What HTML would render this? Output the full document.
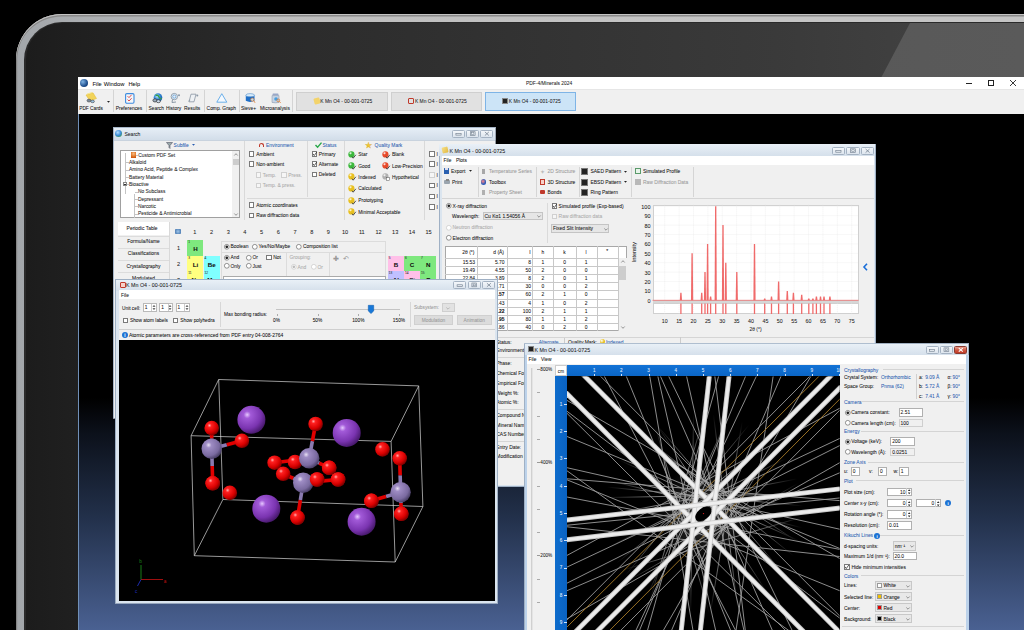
<!DOCTYPE html>
<html><head><meta charset="utf-8">
<style>
*{box-sizing:border-box}
html,body{margin:0;padding:0}
body{width:1024px;height:630px;overflow:hidden;background:#000;position:relative;font-family:"Liberation Sans",sans-serif;color:#111}
.a{position:absolute}
.t{position:absolute;white-space:nowrap;-webkit-text-stroke:0.05px currentColor}
svg{overflow:visible}
</style></head><body>
<div class="a" style="left:15.7px;top:13.8px;width:1100px;height:720px;border-radius:46px;background:linear-gradient(90deg,#a2a6aa 0px,#aaadb0 60px,#bdbdbd 250px,#c4c4c4 700px);box-shadow:inset 0 1px 0 #c4c4c4,inset 0 2.6px 0 #8a8a8a,inset 1.2px 0 0 #858585"></div>
<div class="a" style="left:24px;top:21.6px;width:1100px;height:720px;border-radius:38px;background:#2a2a2a"></div>
<div class="a" style="left:26px;top:23px;width:1100px;height:720px;border-radius:36px;background:linear-gradient(90deg,#1c1c1c 0px,#1f1f1f 40px,#2b2b2b 250px,#3a3a3a 750px,#454545 1000px)"></div>
<div class="a" style="left:0px;top:23px;width:1024px;height:55px;background:linear-gradient(90deg,#505050,#5a5a5a);clip-path:polygon(910px 0,1024px 0,1024px 55px,881px 55px)"></div>
<div class="a" style="left:78px;top:77px;width:946px;height:12px;background:#fff"></div>
<div class="a" style="left:78px;top:89px;width:946px;height:25px;background:#f0f0f0;border-top:1px solid #e6e6e6"></div>
<div class="a" style="left:78px;top:114px;width:946px;height:516px;background:linear-gradient(#000 0%,#000 55%,#0c111b 62%,#22304a 78%,#4a6192 100%)"></div>
<div class="a" style="left:78px;top:114px;width:1px;height:516px;background:#7090b8"></div>
<div class="a" style="left:80px;top:79px;width:8px;height:8px;border-radius:50%;background:radial-gradient(circle at 35% 35%,#7fb3e3,#1f4f8f 60%,#0d2d5a)"></div>
<div class="t" style="left:92.4px;top:80.73px;font-size:5.7px;line-height:6.84px;color:#111;">File</div>
<div class="t" style="left:103.8px;top:80.69px;font-size:5.8px;line-height:6.96px;color:#111;">Window</div>
<div class="t" style="left:128.4px;top:80.73px;font-size:5.7px;line-height:6.84px;color:#111;">Help</div>
<div class="t" style="left:526px;top:80.80px;font-size:4.9px;line-height:5.88px;color:#222;">PDF-4/Minerals 2024</div>
<div class="a" style="left:966px;top:83px;width:6px;height:0.9px;background:#222"></div>
<div class="a" style="left:988px;top:80px;width:6px;height:6px;border:0.9px solid #222"></div>
<svg class="a" style="left:1010px;top:80px" width="6" height="6"><path d="M0 0L6 6M6 0L0 6" stroke="#222" stroke-width="0.9"/></svg>
<svg class="a" style="left:84px;top:92px" width="14" height="12"><path d="M2 3L9 0.8L12.5 6.5L6 9Z" fill="#f2d45a" stroke="#e0b830" stroke-width="0.5"/><path d="M3 2L8 0.5" stroke="#f8e890" stroke-width="1"/><ellipse cx="5" cy="8.6" rx="2" ry="1.4" fill="#7a8a9a" stroke="#444" stroke-width="0.6"/><ellipse cx="8.6" cy="9.4" rx="1.8" ry="1.3" fill="#9ac0e0" stroke="#444" stroke-width="0.6"/></svg>
<svg class="a" style="left:106.5px;top:100.5px" width="4" height="3"><path d="M0 0H3L1.5 1.8Z" fill="#222"/></svg>
<div class="t" style="left:79.2px;top:106.34px;font-size:4.8px;line-height:5.76px;color:#111;">PDF Cards</div>
<div class="a" style="left:113.2px;top:90px;width:1px;height:22px;background:#d4d4d4"></div>
<div class="a" style="left:145.8px;top:90px;width:1px;height:22px;background:#d4d4d4"></div>
<div class="a" style="left:203.8px;top:90px;width:1px;height:22px;background:#d4d4d4"></div>
<div class="a" style="left:238.6px;top:90px;width:1px;height:22px;background:#d4d4d4"></div>
<div class="a" style="left:291.5px;top:90px;width:1px;height:22px;background:#d4d4d4"></div>
<svg class="a" style="left:124.5px;top:92.5px" width="10" height="11"><rect x="0.6" y="0.6" width="8.4" height="9.6" rx="1.2" fill="#f4f6f8" stroke="#3d8ce0" stroke-width="1.1"/><path d="M2.6 3.2L4 4.6L6.6 1.8M2.6 6.6L4 8L6.6 5.2" fill="none" stroke="#d83838" stroke-width="0.9"/></svg>
<div class="t" style="left:115.7px;top:106.27px;font-size:4.95px;line-height:5.94px;color:#111;">Preferences</div>
<svg class="a" style="left:151.5px;top:92.8px" width="11" height="10"><defs><radialGradient id="gl" cx="0.4" cy="0.35" r="0.7"><stop offset="0" stop-color="#bfe6ff"/><stop offset="0.5" stop-color="#2f86d8"/><stop offset="1" stop-color="#1a5aa0"/></radialGradient></defs><circle cx="6" cy="4.6" r="4.3" fill="url(#gl)"/><path d="M3.5 2.5Q6 1.5 7 4Q8 6 9.5 5.5" fill="none" stroke="#3aa040" stroke-width="1.4"/><ellipse cx="3" cy="7.4" rx="2.1" ry="1.6" fill="#9ab" stroke="#333" stroke-width="0.7"/><ellipse cx="6.4" cy="8.2" rx="2" ry="1.5" fill="#cde" stroke="#333" stroke-width="0.7"/></svg>
<div class="t" style="left:148.5px;top:106.30px;font-size:4.9px;line-height:5.88px;color:#111;">Search</div>
<svg class="a" style="left:169.5px;top:92.8px" width="11" height="10"><circle cx="4.3" cy="3.6" r="3.2" fill="#e8eef4" stroke="#8a98a6" stroke-width="0.9"/><circle cx="4.3" cy="3.6" r="1.6" fill="none" stroke="#3a8ad0" stroke-width="0.6"/><path d="M2.5 6.5L2 9.5L6 9" fill="none" stroke="#8a98a6" stroke-width="1"/><circle cx="9" cy="2.2" r="1" fill="#8a98a6"/></svg>
<div class="t" style="left:166px;top:106.30px;font-size:4.9px;line-height:5.88px;color:#111;">History</div>
<svg class="a" style="left:188px;top:92.8px" width="11" height="10"><path d="M3 1.2H8L6 8.8H1Z" fill="#eef1f4" stroke="#8a96a2" stroke-width="0.8"/><path d="M1 8.8Q0.5 6.8 2.2 7.2" fill="none" stroke="#8a96a2" stroke-width="0.7"/><circle cx="9.3" cy="2.6" r="1" fill="#8a98a6"/></svg>
<div class="t" style="left:184px;top:106.30px;font-size:4.9px;line-height:5.88px;color:#111;">Results</div>
<svg class="a" style="left:215.5px;top:93px" width="12" height="10"><path d="M5.8 0.7 L10.8 9.2 L0.8 9.2 Z" fill="#f4f9fe" stroke="#4a9ee6" stroke-width="0.8"/></svg>
<div class="t" style="left:206.6px;top:106.30px;font-size:4.9px;line-height:5.88px;color:#111;">Comp. Graph</div>
<svg class="a" style="left:244.5px;top:92.8px" width="11" height="10"><path d="M0.8 2.2V7.8Q5 10 9.5 7.8V2.2Z" fill="#1f6fc8"/><ellipse cx="5.15" cy="2.2" rx="4.35" ry="1.6" fill="#d8ecfb" stroke="#3a7cc0" stroke-width="0.5"/><circle cx="7.3" cy="6.6" r="1.6" fill="#bfe0f8" stroke="#e07a2a" stroke-width="0.7"/><path d="M8.4 7.8L10 9.4" stroke="#e07a2a" stroke-width="1"/></svg>
<div class="t" style="left:241px;top:106.30px;font-size:4.9px;line-height:5.88px;color:#111;">Sieve+</div>
<svg class="a" style="left:271px;top:92.5px" width="11" height="11"><rect x="1.5" y="0.6" width="6" height="2" rx="0.8" fill="#9aa8c8"/><path d="M1 2.6H8V9.4Q4.5 10.4 1 9.4Z" fill="#c8d4e4" stroke="#8090a8" stroke-width="0.5"/><circle cx="5" cy="6" r="1.8" fill="#4aa0e0"/><circle cx="7.3" cy="7.4" r="1.4" fill="none" stroke="#e07a2a" stroke-width="0.7"/><path d="M8.2 8.4L9.6 9.8" stroke="#e07a2a" stroke-width="0.9"/></svg>
<div class="t" style="left:260px;top:106.27px;font-size:4.95px;line-height:5.94px;color:#111;">Microanalysis</div>
<div class="a" style="left:296px;top:91.7px;width:91.5px;height:19.3px;background:#e1e1e1;border:0.9px solid #cfcfcf"></div>
<div class="a" style="left:314px;top:98px;width:6px;height:6px;background:#f3d36b;border-radius:1px;transform:rotate(-15deg)"></div>
<div class="t" style="left:320.3px;top:99.27px;font-size:4.95px;line-height:5.94px;color:#222;">K Mn O4 - 00-001-0725</div>
<div class="a" style="left:390.6px;top:91.7px;width:91.5px;height:19.3px;background:#e1e1e1;border:0.9px solid #cfcfcf"></div>
<div class="a" style="left:407.6px;top:98px;width:6px;height:6px;border:1.4px solid #c0392b;border-radius:1px"></div>
<div class="t" style="left:414.90000000000003px;top:99.27px;font-size:4.95px;line-height:5.94px;color:#222;">K Mn O4 - 00-001-0725</div>
<div class="a" style="left:484.5px;top:91.7px;width:91.5px;height:19.3px;background:#cce4f7;border:0.9px solid #7eb4e6"></div>
<div class="a" style="left:501.5px;top:98px;width:6px;height:6px;background:#222;border:0.8px solid #888"></div>
<div class="t" style="left:508.8px;top:99.27px;font-size:4.95px;line-height:5.94px;color:#222;">K Mn O4 - 00-001-0725</div>
<div class="a" style="left:0;top:0;width:1024px;height:630px;clip-path:inset(127px 528.5px 211.5px 113px)">
<div class="a" style="left:113px;top:127px;width:382.5px;height:291.5px;background:#f0f0f0;border:0.9px solid #a7b6c8"></div>
<div class="a" style="left:113px;top:127px;width:382.5px;height:12.5px;background:linear-gradient(#e6eef6,#d2dde9);border:0.9px solid #a7b6c8;border-bottom:none"></div>
<div class="a" style="left:115px;top:130px;width:7px;height:7px;border-radius:50%;background:radial-gradient(circle at 40% 35%,#b5e0ff,#3a8ad8 50%,#3c9a4a 85%)"></div>
<div class="t" style="left:124.5px;top:131.25px;font-size:5.0px;line-height:6.00px;color:#222;">Search</div>
<div class="a" style="left:452.0px;top:129.8px;width:13px;height:7.8px;border:0.7px solid #a4b2c2;border-radius:1.5px;background:linear-gradient(#f4f7fa,#dde5ee)"></div>
<svg class="a" style="left:0;top:0" width="1" height="1"><rect x="455.9" y="133.50000000000003" width="5.2" height="1.6" fill="none" stroke="#6a7888" stroke-width="0.6"/></svg>
<div class="a" style="left:466.2px;top:129.8px;width:13px;height:7.8px;border:0.7px solid #a4b2c2;border-radius:1.5px;background:linear-gradient(#f4f7fa,#dde5ee)"></div>
<svg class="a" style="left:0;top:0" width="1" height="1"><rect x="470.3" y="131.70000000000002" width="4.8" height="3.8" fill="none" stroke="#6a7888" stroke-width="0.6"/><rect x="471.5" y="132.70000000000002" width="2.4" height="1.8" fill="none" stroke="#6a7888" stroke-width="0.5"/></svg>
<div class="a" style="left:480.4px;top:129.8px;width:13px;height:7.8px;border:0.7px solid #a4b2c2;border-radius:1.5px;background:linear-gradient(#f4f7fa,#dde5ee)"></div>
<svg class="a" style="left:0;top:0" width="1" height="1"><path d="M484.9 131.9L488.9 135.50000000000003M488.9 131.9L484.9 135.50000000000003" stroke="#6a7888" stroke-width="0.7"/></svg>
<div class="a" style="left:114px;top:139.5px;width:380.5px;height:0.8px;background:#c9d3de"></div>
<svg class="a" style="left:166px;top:141.5px" width="7" height="7"><path d="M0.5 0.5H6.5L4 3.5V6.5L3 5.5V3.5Z" fill="#9aa" stroke="#556" stroke-width="0.6"/></svg>
<div class="t" style="left:173.6px;top:142.77px;font-size:4.95px;line-height:5.94px;color:#2a5db0;">Subfile</div>
<svg class="a" style="left:192px;top:144.3px" width="3" height="2"><path d="M0 0H3L1.5 1.8Z" fill="#2a5db0"/></svg>
<div class="a" style="left:120px;top:150.2px;width:120px;height:68px;background:#fff;border:0.7px solid #a0a0a0"></div>
<div class="a" style="left:232px;top:151px;width:7.4px;height:66.4px;background:#f0f0f0"></div>
<div class="a" style="left:232.5px;top:158.5px;width:6.4px;height:6px;background:#cdcdcd"></div>
<svg class="a" style="left:234px;top:153px" width="4" height="3"><path d="M0.3 2.5L2 0.7L3.7 2.5" fill="none" stroke="#555" stroke-width="0.6"/></svg>
<svg class="a" style="left:234px;top:212.5px" width="4" height="3"><path d="M0.3 0.5L2 2.3L3.7 0.5" fill="none" stroke="#555" stroke-width="0.6"/></svg>
<div class="a" style="left:125px;top:153px;width:0.6px;height:41px;border-left:0.5px solid #c4c4c4"></div>
<div class="a" style="left:134px;top:194px;width:0.6px;height:24px;border-left:0.5px solid #c4c4c4"></div>
<div class="t" style="left:138.3px;top:152.59px;font-size:4.9px;line-height:5.88px;color:#222;">Custom PDF Set</div>
<div class="a" style="left:134.5px;top:154.8px;width:3px;height:0.6px;border-top:0.5px solid #c4c4c4"></div>
<div class="t" style="left:129px;top:159.99px;font-size:4.9px;line-height:5.88px;color:#222;">Alkaloid</div>
<div class="a" style="left:125.5px;top:162.2px;width:3px;height:0.6px;border-top:0.5px solid #c4c4c4"></div>
<div class="t" style="left:129px;top:167.39px;font-size:4.9px;line-height:5.88px;color:#222;">Amino Acid, Peptide &amp; Complex</div>
<div class="a" style="left:125.5px;top:169.6px;width:3px;height:0.6px;border-top:0.5px solid #c4c4c4"></div>
<div class="t" style="left:129px;top:174.79px;font-size:4.9px;line-height:5.88px;color:#222;">Battery Material</div>
<div class="a" style="left:125.5px;top:177px;width:3px;height:0.6px;border-top:0.5px solid #c4c4c4"></div>
<div class="t" style="left:129px;top:182.09px;font-size:4.9px;line-height:5.88px;color:#222;">Bioactive</div>
<div class="a" style="left:125.5px;top:184.3px;width:3px;height:0.6px;border-top:0.5px solid #c4c4c4"></div>
<div class="t" style="left:138px;top:189.49px;font-size:4.9px;line-height:5.88px;color:#222;">No Subclass</div>
<div class="a" style="left:134.5px;top:191.7px;width:3px;height:0.6px;border-top:0.5px solid #c4c4c4"></div>
<div class="t" style="left:138px;top:196.79px;font-size:4.9px;line-height:5.88px;color:#222;">Depressant</div>
<div class="a" style="left:134.5px;top:199px;width:3px;height:0.6px;border-top:0.5px solid #c4c4c4"></div>
<div class="t" style="left:138px;top:204.09px;font-size:4.9px;line-height:5.88px;color:#222;">Narcotic</div>
<div class="a" style="left:134.5px;top:206.3px;width:3px;height:0.6px;border-top:0.5px solid #c4c4c4"></div>
<div class="t" style="left:138px;top:211.49px;font-size:4.9px;line-height:5.88px;color:#222;">Pesticide &amp; Antimicrobial</div>
<div class="a" style="left:134.5px;top:213.7px;width:3px;height:0.6px;border-top:0.5px solid #c4c4c4"></div>
<div class="a" style="left:131px;top:151.5px;width:5px;height:6px;background:radial-gradient(circle at 50% 30%,#f6c08a,#e07020 60%,#c04a10)"></div>
<div class="a" style="left:122.8px;top:182.3px;width:4px;height:4px;border:0.6px solid #888;background:#fff"></div>
<div class="a" style="left:123.6px;top:184.1px;width:2.4px;height:0.6px;background:#333"></div>
<div class="a" style="left:243.8px;top:141px;width:0.8px;height:79px;background:#d9d9d9"></div>
<div class="a" style="left:306.5px;top:141px;width:0.8px;height:56px;background:#d9d9d9"></div>
<div class="a" style="left:344px;top:141px;width:0.8px;height:79px;background:#d9d9d9"></div>
<div class="a" style="left:424.4px;top:141px;width:0.8px;height:79px;background:#d9d9d9"></div>
<div class="a" style="left:247px;top:198px;width:97px;height:0.8px;background:#d9d9d9"></div>
<div class="a" style="left:259px;top:143px;width:5px;height:3.5px;border:0.8px solid #c0392b;border-bottom:none;border-radius:3px 3px 0 0"></div>
<div class="t" style="left:266px;top:142.77px;font-size:4.95px;line-height:5.94px;color:#2a5db0;">Environment</div>
<div class="a" style="left:248.6px;top:151.0px;width:5.6px;height:5.6px;border:0.7px solid #7a7a7a;background:#fff"></div>
<div class="t" style="left:256.2px;top:151.59px;font-size:4.9px;line-height:5.88px;color:#111;">Ambient</div>
<div class="a" style="left:248.6px;top:161.39999999999998px;width:5.6px;height:5.6px;border:0.7px solid #7a7a7a;background:#fff"></div>
<div class="t" style="left:256.2px;top:161.99px;font-size:4.9px;line-height:5.88px;color:#111;">Non-ambient</div>
<div class="a" style="left:255.5px;top:172.2px;width:5.6px;height:5.6px;border:0.7px solid #d0d0d0;background:#f6f6f6"></div>
<div class="t" style="left:262.8px;top:172.79px;font-size:4.9px;line-height:5.88px;color:#aaa;">Temp.</div>
<div class="a" style="left:281px;top:172.2px;width:5.6px;height:5.6px;border:0.7px solid #d0d0d0;background:#f6f6f6"></div>
<div class="t" style="left:288.3px;top:172.79px;font-size:4.9px;line-height:5.88px;color:#aaa;">Press.</div>
<div class="a" style="left:255.5px;top:182.89999999999998px;width:5.6px;height:5.6px;border:0.7px solid #d0d0d0;background:#f6f6f6"></div>
<div class="t" style="left:262.8px;top:183.49px;font-size:4.9px;line-height:5.88px;color:#aaa;">Temp. &amp; press.</div>
<div class="a" style="left:248.6px;top:202.2px;width:5.6px;height:5.6px;border:0.7px solid #7a7a7a;background:#fff"></div>
<div class="t" style="left:256.2px;top:202.79px;font-size:4.9px;line-height:5.88px;color:#111;">Atomic coordinates</div>
<div class="a" style="left:248.6px;top:212.7px;width:5.6px;height:5.6px;border:0.7px solid #7a7a7a;background:#fff"></div>
<div class="t" style="left:256.2px;top:213.29px;font-size:4.9px;line-height:5.88px;color:#111;">Raw diffraction data</div>
<svg class="a" style="left:314.5px;top:141.8px" width="7" height="6"><path d="M0.5 3L2.6 5.3L6.5 0.6" fill="none" stroke="#2aa84a" stroke-width="1.4"/></svg>
<div class="t" style="left:322.5px;top:142.77px;font-size:4.95px;line-height:5.94px;color:#2a5db0;">Status</div>
<div class="a" style="left:311.5px;top:151.0px;width:5.6px;height:5.6px;border:0.7px solid #7a7a7a;background:#fff"></div>
<svg class="a" style="left:311.5px;top:151.0px" width="5.6" height="5.6"><path d="M1 2.8 L2.2399999999999998 4.592 L4.8 1" fill="none" stroke="#333" stroke-width="0.8"/></svg>
<div class="t" style="left:318.7px;top:151.59px;font-size:4.9px;line-height:5.88px;color:#111;">Primary</div>
<div class="a" style="left:311.5px;top:161.39999999999998px;width:5.6px;height:5.6px;border:0.7px solid #7a7a7a;background:#fff"></div>
<svg class="a" style="left:311.5px;top:161.39999999999998px" width="5.6" height="5.6"><path d="M1 2.8 L2.2399999999999998 4.592 L4.8 1" fill="none" stroke="#333" stroke-width="0.8"/></svg>
<div class="t" style="left:318.7px;top:161.99px;font-size:4.9px;line-height:5.88px;color:#111;">Alternate</div>
<div class="a" style="left:311.5px;top:171.89999999999998px;width:5.6px;height:5.6px;border:0.7px solid #7a7a7a;background:#fff"></div>
<div class="t" style="left:318.7px;top:172.49px;font-size:4.9px;line-height:5.88px;color:#111;">Deleted</div>
<div class="t" style="left:364.5px;top:141.43px;font-size:7.5px;line-height:9.00px;color:#f2c832;-webkit-text-stroke:0.3px #d0a020">&#9733;</div>
<div class="t" style="left:374.6px;top:142.77px;font-size:4.95px;line-height:5.94px;color:#2a5db0;">Quality Mark</div>
<svg class="a" style="left:347.8px;top:150.70000000000002px" width="9" height="9"><defs><radialGradient id="q348154" cx="0.35" cy="0.3" r="0.75"><stop offset="0" stop-color="#fff"/><stop offset="0.35" stop-color="#3cb83c"/><stop offset="1" stop-color="#3cb83c"/></radialGradient></defs><circle cx="3.4" cy="3.4" r="3.1" fill="url(#q348154)"/><path d="M4 5.6L5.2 7.2L7.8 3.8" fill="none" stroke="#222" stroke-width="0.8"/></svg>
<div class="t" style="left:358.3px;top:152.09px;font-size:4.9px;line-height:5.88px;color:#111;">Star</div>
<svg class="a" style="left:347.8px;top:162.20000000000002px" width="9" height="9"><defs><radialGradient id="q348165" cx="0.35" cy="0.3" r="0.75"><stop offset="0" stop-color="#fff"/><stop offset="0.35" stop-color="#3cb83c"/><stop offset="1" stop-color="#3cb83c"/></radialGradient></defs><circle cx="3.4" cy="3.4" r="3.1" fill="url(#q348165)"/><path d="M4 5.6L5.2 7.2L7.8 3.8" fill="none" stroke="#222" stroke-width="0.8"/></svg>
<div class="t" style="left:358.3px;top:163.59px;font-size:4.9px;line-height:5.88px;color:#111;">Good</div>
<svg class="a" style="left:347.8px;top:173.4px" width="9" height="9"><defs><radialGradient id="q348177" cx="0.35" cy="0.3" r="0.75"><stop offset="0" stop-color="#fff"/><stop offset="0.35" stop-color="#e8c020"/><stop offset="1" stop-color="#e8c020"/></radialGradient></defs><circle cx="3.4" cy="3.4" r="3.1" fill="url(#q348177)"/><path d="M4 5.6L5.2 7.2L7.8 3.8" fill="none" stroke="#222" stroke-width="0.8"/></svg>
<div class="t" style="left:358.3px;top:174.79px;font-size:4.9px;line-height:5.88px;color:#111;">Indexed</div>
<svg class="a" style="left:347.8px;top:185.1px" width="9" height="9"><defs><radialGradient id="q348188" cx="0.35" cy="0.3" r="0.75"><stop offset="0" stop-color="#fff"/><stop offset="0.35" stop-color="#e8c020"/><stop offset="1" stop-color="#e8c020"/></radialGradient></defs><circle cx="3.4" cy="3.4" r="3.1" fill="url(#q348188)"/><path d="M4 5.6L5.2 7.2L7.8 3.8" fill="none" stroke="#222" stroke-width="0.8"/></svg>
<div class="t" style="left:358.3px;top:186.49px;font-size:4.9px;line-height:5.88px;color:#111;">Calculated</div>
<svg class="a" style="left:347.8px;top:196.70000000000002px" width="9" height="9"><defs><radialGradient id="q348200" cx="0.35" cy="0.3" r="0.75"><stop offset="0" stop-color="#fff"/><stop offset="0.35" stop-color="#e8c020"/><stop offset="1" stop-color="#e8c020"/></radialGradient></defs><circle cx="3.4" cy="3.4" r="3.1" fill="url(#q348200)"/><path d="M4 5.6L5.2 7.2L7.8 3.8" fill="none" stroke="#222" stroke-width="0.8"/></svg>
<div class="t" style="left:358.3px;top:198.09px;font-size:4.9px;line-height:5.88px;color:#111;">Prototyping</div>
<svg class="a" style="left:347.8px;top:208.4px" width="9" height="9"><defs><radialGradient id="q348212" cx="0.35" cy="0.3" r="0.75"><stop offset="0" stop-color="#fff"/><stop offset="0.35" stop-color="#e8c020"/><stop offset="1" stop-color="#e8c020"/></radialGradient></defs><circle cx="3.4" cy="3.4" r="3.1" fill="url(#q348212)"/><path d="M4 5.6L5.2 7.2L7.8 3.8" fill="none" stroke="#222" stroke-width="0.8"/></svg>
<div class="t" style="left:358.3px;top:209.79px;font-size:4.9px;line-height:5.88px;color:#111;">Minimal Acceptable</div>
<svg class="a" style="left:381.5px;top:150.70000000000002px" width="9" height="9"><defs><radialGradient id="q382154" cx="0.35" cy="0.3" r="0.75"><stop offset="0" stop-color="#fff"/><stop offset="0.35" stop-color="#e84a2a"/><stop offset="1" stop-color="#e84a2a"/></radialGradient></defs><circle cx="3.4" cy="3.4" r="3.1" fill="url(#q382154)"/><path d="M4 5.6L5.2 7.2L7.8 3.8" fill="none" stroke="#222" stroke-width="0.8"/></svg>
<div class="t" style="left:392px;top:152.09px;font-size:4.9px;line-height:5.88px;color:#111;">Blank</div>
<svg class="a" style="left:381.5px;top:162.20000000000002px" width="9" height="9"><defs><radialGradient id="q382165" cx="0.35" cy="0.3" r="0.75"><stop offset="0" stop-color="#fff"/><stop offset="0.35" stop-color="#e84a2a"/><stop offset="1" stop-color="#e84a2a"/></radialGradient></defs><circle cx="3.4" cy="3.4" r="3.1" fill="url(#q382165)"/><path d="M4 5.6L5.2 7.2L7.8 3.8" fill="none" stroke="#222" stroke-width="0.8"/></svg>
<div class="t" style="left:392px;top:163.59px;font-size:4.9px;line-height:5.88px;color:#111;">Low-Precision</div>
<svg class="a" style="left:381.5px;top:173.4px" width="9" height="9"><defs><radialGradient id="q382177" cx="0.35" cy="0.3" r="0.75"><stop offset="0" stop-color="#fff"/><stop offset="0.35" stop-color="#b0b0b0"/><stop offset="1" stop-color="#b0b0b0"/></radialGradient></defs><circle cx="3.4" cy="3.4" r="3.1" fill="url(#q382177)"/><rect x="4.3" y="4.6" width="3" height="3" fill="#fff" stroke="#555" stroke-width="0.5"/></svg>
<div class="t" style="left:392px;top:174.79px;font-size:4.9px;line-height:5.88px;color:#111;">Hypothetical</div>
<div class="a" style="left:429px;top:151.0px;width:5.6px;height:5.6px;border:0.7px solid #7a7a7a;background:#fff"></div>
<div class="t" style="left:436.5px;top:151.59px;font-size:4.9px;line-height:5.88px;color:#111;">I</div>
<div class="a" style="left:429px;top:161.39999999999998px;width:5.6px;height:5.6px;border:0.7px solid #7a7a7a;background:#fff"></div>
<div class="t" style="left:436.5px;top:161.99px;font-size:4.9px;line-height:5.88px;color:#111;">I</div>
<div class="a" style="left:429px;top:172.2px;width:5.6px;height:5.6px;border:0.7px solid #d0d0d0;background:#f6f6f6"></div>
<div class="t" style="left:436.5px;top:172.79px;font-size:4.9px;line-height:5.88px;color:#111;">I</div>
<div class="a" style="left:429px;top:182.89999999999998px;width:5.6px;height:5.6px;border:0.7px solid #7a7a7a;background:#fff"></div>
<div class="t" style="left:436.5px;top:183.49px;font-size:4.9px;line-height:5.88px;color:#111;">I</div>
<div class="a" style="left:429px;top:193.5px;width:5.6px;height:5.6px;border:0.7px solid #7a7a7a;background:#fff"></div>
<div class="t" style="left:436.5px;top:194.09px;font-size:4.9px;line-height:5.88px;color:#111;">I</div>
<div class="a" style="left:429px;top:204.2px;width:5.6px;height:5.6px;border:0.7px solid #7a7a7a;background:#fff"></div>
<div class="t" style="left:436.5px;top:204.79px;font-size:4.9px;line-height:5.88px;color:#111;">I</div>
<div class="a" style="left:118px;top:222px;width:51px;height:13.2px;background:#fff"></div>
<div class="t" style="left:126.6px;top:226.37px;font-size:4.95px;line-height:5.94px;color:#111;">Periodic Table</div>
<div class="a" style="left:118px;top:235.5px;width:51px;height:11.8px;background:#f0f0f0;border-top:0.8px solid #dcdcdc"></div>
<div class="t" style="left:93.5px;width:100px;text-align:center;top:239.29px;font-size:4.9px;line-height:5.88px;color:#111;">Formula/Name</div>
<div class="a" style="left:118px;top:247.7px;width:51px;height:11.8px;background:#f0f0f0;border-top:0.8px solid #dcdcdc"></div>
<div class="t" style="left:93.5px;width:100px;text-align:center;top:251.49px;font-size:4.9px;line-height:5.88px;color:#111;">Classifications</div>
<div class="a" style="left:118px;top:259.9px;width:51px;height:11.8px;background:#f0f0f0;border-top:0.8px solid #dcdcdc"></div>
<div class="t" style="left:93.5px;width:100px;text-align:center;top:263.69px;font-size:4.9px;line-height:5.88px;color:#111;">Crystallography</div>
<div class="a" style="left:118px;top:272.1px;width:51px;height:11.8px;background:#f0f0f0;border-top:0.8px solid #dcdcdc"></div>
<div class="t" style="left:93.5px;width:100px;text-align:center;top:275.90px;font-size:4.9px;line-height:5.88px;color:#111;">Modulated</div>
<div class="a" style="left:169px;top:222px;width:0.8px;height:60px;background:#d9d9d9"></div>
<div class="a" style="left:175px;top:229px;width:6px;height:5px;background:radial-gradient(circle,#9ec4e8,#3c6ea8);border-radius:1px"></div>
<div class="t" style="left:144.8px;width:100px;text-align:center;top:229.48px;font-size:5.6px;line-height:6.72px;color:#222;">1</div>
<div class="t" style="left:161.5px;width:100px;text-align:center;top:229.48px;font-size:5.6px;line-height:6.72px;color:#222;">2</div>
<div class="t" style="left:178.20000000000002px;width:100px;text-align:center;top:229.48px;font-size:5.6px;line-height:6.72px;color:#222;">3</div>
<div class="t" style="left:194.9px;width:100px;text-align:center;top:229.48px;font-size:5.6px;line-height:6.72px;color:#222;">4</div>
<div class="t" style="left:211.60000000000002px;width:100px;text-align:center;top:229.48px;font-size:5.6px;line-height:6.72px;color:#222;">5</div>
<div class="t" style="left:228.3px;width:100px;text-align:center;top:229.48px;font-size:5.6px;line-height:6.72px;color:#222;">6</div>
<div class="t" style="left:245.0px;width:100px;text-align:center;top:229.48px;font-size:5.6px;line-height:6.72px;color:#222;">7</div>
<div class="t" style="left:261.7px;width:100px;text-align:center;top:229.48px;font-size:5.6px;line-height:6.72px;color:#222;">8</div>
<div class="t" style="left:278.4px;width:100px;text-align:center;top:229.48px;font-size:5.6px;line-height:6.72px;color:#222;">9</div>
<div class="t" style="left:295.1px;width:100px;text-align:center;top:229.48px;font-size:5.6px;line-height:6.72px;color:#222;">10</div>
<div class="t" style="left:311.8px;width:100px;text-align:center;top:229.48px;font-size:5.6px;line-height:6.72px;color:#222;">11</div>
<div class="t" style="left:328.5px;width:100px;text-align:center;top:229.48px;font-size:5.6px;line-height:6.72px;color:#222;">12</div>
<div class="t" style="left:345.2px;width:100px;text-align:center;top:229.48px;font-size:5.6px;line-height:6.72px;color:#222;">13</div>
<div class="t" style="left:361.9px;width:100px;text-align:center;top:229.48px;font-size:5.6px;line-height:6.72px;color:#222;">14</div>
<div class="t" style="left:378.6px;width:100px;text-align:center;top:229.48px;font-size:5.6px;line-height:6.72px;color:#222;">15</div>
<div class="t" style="left:128.6px;width:100px;text-align:center;top:245.28px;font-size:5.6px;line-height:6.72px;color:#222;">1</div>
<div class="t" style="left:128.6px;width:100px;text-align:center;top:261.48px;font-size:5.6px;line-height:6.72px;color:#222;">2</div>
<div class="t" style="left:128.6px;width:100px;text-align:center;top:277.48px;font-size:5.6px;line-height:6.72px;color:#222;">3</div>
<div class="a" style="left:187.3px;top:240.3px;width:16.2px;height:15.6px;background:#7ee87e"></div>
<div class="t" style="left:188.3px;top:241.06px;font-size:3.2px;line-height:3.84px;color:#333;">1</div>
<div class="t" style="left:145.5px;width:100px;text-align:center;top:245.11px;font-size:6.2px;line-height:7.44px;color:#111;font-weight:bold">H</div>
<div class="a" style="left:187.3px;top:255.8px;width:16.2px;height:15.6px;background:#ffff80"></div>
<div class="t" style="left:188.3px;top:256.56px;font-size:3.2px;line-height:3.84px;color:#333;">3</div>
<div class="t" style="left:145.5px;width:100px;text-align:center;top:260.61px;font-size:6.2px;line-height:7.44px;color:#111;font-weight:bold">Li</div>
<div class="a" style="left:203.5px;top:255.8px;width:16.2px;height:15.6px;background:#80ffff"></div>
<div class="t" style="left:204.5px;top:256.56px;font-size:3.2px;line-height:3.84px;color:#333;">4</div>
<div class="t" style="left:161.7px;width:100px;text-align:center;top:260.61px;font-size:6.2px;line-height:7.44px;color:#111;font-weight:bold">Be</div>
<div class="a" style="left:187.3px;top:271.4px;width:16.2px;height:15.6px;background:#ffff80"></div>
<div class="t" style="left:188.3px;top:272.16px;font-size:3.2px;line-height:3.84px;color:#333;">11</div>
<div class="t" style="left:145.5px;width:100px;text-align:center;top:276.21px;font-size:6.2px;line-height:7.44px;color:#111;font-weight:bold">Na</div>
<div class="a" style="left:203.5px;top:271.4px;width:16.2px;height:15.6px;background:#80ffff"></div>
<div class="t" style="left:204.5px;top:272.16px;font-size:3.2px;line-height:3.84px;color:#333;">12</div>
<div class="t" style="left:161.7px;width:100px;text-align:center;top:276.21px;font-size:6.2px;line-height:7.44px;color:#111;font-weight:bold">Mg</div>
<div class="a" style="left:387.7px;top:255.8px;width:16.2px;height:15.6px;background:#ffc0e8"></div>
<div class="t" style="left:388.7px;top:256.56px;font-size:3.2px;line-height:3.84px;color:#333;">5</div>
<div class="t" style="left:345.9px;width:100px;text-align:center;top:260.61px;font-size:6.2px;line-height:7.44px;color:#111;font-weight:bold">B</div>
<div class="a" style="left:403.9px;top:255.8px;width:16.2px;height:15.6px;background:#7ee87e"></div>
<div class="t" style="left:404.9px;top:256.56px;font-size:3.2px;line-height:3.84px;color:#333;">6</div>
<div class="t" style="left:362.09999999999997px;width:100px;text-align:center;top:260.61px;font-size:6.2px;line-height:7.44px;color:#111;font-weight:bold">C</div>
<div class="a" style="left:420.1px;top:255.8px;width:16.2px;height:15.6px;background:#7ee87e"></div>
<div class="t" style="left:421.1px;top:256.56px;font-size:3.2px;line-height:3.84px;color:#333;">7</div>
<div class="t" style="left:378.3px;width:100px;text-align:center;top:260.61px;font-size:6.2px;line-height:7.44px;color:#111;font-weight:bold">N</div>
<div class="a" style="left:387.7px;top:271.4px;width:16.2px;height:15.6px;background:#c0c0ff"></div>
<div class="t" style="left:388.7px;top:272.16px;font-size:3.2px;line-height:3.84px;color:#333;">13</div>
<div class="t" style="left:345.9px;width:100px;text-align:center;top:276.21px;font-size:6.2px;line-height:7.44px;color:#111;font-weight:bold">Al</div>
<div class="a" style="left:403.9px;top:271.4px;width:16.2px;height:15.6px;background:#ffc0e8"></div>
<div class="t" style="left:404.9px;top:272.16px;font-size:3.2px;line-height:3.84px;color:#333;">14</div>
<div class="t" style="left:362.09999999999997px;width:100px;text-align:center;top:276.21px;font-size:6.2px;line-height:7.44px;color:#111;font-weight:bold">Si</div>
<div class="a" style="left:420.1px;top:271.4px;width:16.2px;height:15.6px;background:#7ee87e"></div>
<div class="t" style="left:421.1px;top:272.16px;font-size:3.2px;line-height:3.84px;color:#333;">15</div>
<div class="t" style="left:378.3px;width:100px;text-align:center;top:276.21px;font-size:6.2px;line-height:7.44px;color:#111;font-weight:bold">P</div>
<div class="a" style="left:221.2px;top:240.8px;width:164.8px;height:40px;border:0.8px solid #dcdcdc;background:#f0f0f0"></div>
<svg class="a" style="left:223.5px;top:243.6px" width="5.6" height="5.6"><circle cx="2.8" cy="2.8" r="2.4" fill="#fff" stroke="#6a6a6a" stroke-width="0.7"/><circle cx="2.8" cy="2.8" r="1.35" fill="#222"/></svg>
<div class="t" style="left:230.5px;top:244.19px;font-size:4.9px;line-height:5.88px;color:#111;">Boolean</div>
<svg class="a" style="left:251.5px;top:243.6px" width="5.6" height="5.6"><circle cx="2.8" cy="2.8" r="2.4" fill="#fff" stroke="#6a6a6a" stroke-width="0.7"/></svg>
<div class="t" style="left:258.5px;top:244.19px;font-size:4.9px;line-height:5.88px;color:#111;">Yes/No/Maybe</div>
<svg class="a" style="left:296px;top:243.6px" width="5.6" height="5.6"><circle cx="2.8" cy="2.8" r="2.4" fill="#fff" stroke="#6a6a6a" stroke-width="0.7"/></svg>
<div class="t" style="left:303px;top:244.19px;font-size:4.9px;line-height:5.88px;color:#111;">Composition list</div>
<div class="a" style="left:221.5px;top:251.5px;width:164px;height:0.8px;background:#dcdcdc"></div>
<svg class="a" style="left:223.5px;top:254.7px" width="5.6" height="5.6"><circle cx="2.8" cy="2.8" r="2.4" fill="#fff" stroke="#6a6a6a" stroke-width="0.7"/><circle cx="2.8" cy="2.8" r="1.35" fill="#222"/></svg>
<div class="t" style="left:230.5px;top:255.29px;font-size:4.9px;line-height:5.88px;color:#111;">And</div>
<svg class="a" style="left:245.5px;top:254.7px" width="5.6" height="5.6"><circle cx="2.8" cy="2.8" r="2.4" fill="#fff" stroke="#6a6a6a" stroke-width="0.7"/></svg>
<div class="t" style="left:252.5px;top:255.29px;font-size:4.9px;line-height:5.88px;color:#111;">Or</div>
<div class="a" style="left:266px;top:254.7px;width:5.6px;height:5.6px;border:0.7px solid #7a7a7a;background:#fff"></div>
<div class="t" style="left:273.2px;top:255.29px;font-size:4.9px;line-height:5.88px;color:#111;">Not</div>
<svg class="a" style="left:223.5px;top:263.2px" width="5.6" height="5.6"><circle cx="2.8" cy="2.8" r="2.4" fill="#fff" stroke="#6a6a6a" stroke-width="0.7"/></svg>
<div class="t" style="left:230.5px;top:263.80px;font-size:4.9px;line-height:5.88px;color:#111;">Only</div>
<svg class="a" style="left:245.5px;top:263.2px" width="5.6" height="5.6"><circle cx="2.8" cy="2.8" r="2.4" fill="#fff" stroke="#6a6a6a" stroke-width="0.7"/></svg>
<div class="t" style="left:252.5px;top:263.80px;font-size:4.9px;line-height:5.88px;color:#111;">Just</div>
<div class="a" style="left:285.5px;top:253px;width:0.8px;height:26px;background:#dcdcdc"></div>
<div class="t" style="left:289.5px;top:255.29px;font-size:4.9px;line-height:5.88px;color:#aaa;">Grouping:</div>
<svg class="a" style="left:291px;top:264.2px" width="5.6" height="5.6"><circle cx="2.8" cy="2.8" r="2.4" fill="#fff" stroke="#c8c8c8" stroke-width="0.7"/><circle cx="2.8" cy="2.8" r="1.35" fill="#bbb"/></svg>
<div class="t" style="left:297.5px;top:264.80px;font-size:4.9px;line-height:5.88px;color:#aaa;">And</div>
<svg class="a" style="left:311px;top:264.2px" width="5.6" height="5.6"><circle cx="2.8" cy="2.8" r="2.4" fill="#fff" stroke="#c8c8c8" stroke-width="0.7"/></svg>
<div class="t" style="left:317.5px;top:264.80px;font-size:4.9px;line-height:5.88px;color:#aaa;">Or</div>
<div class="a" style="left:328.5px;top:253px;width:0.8px;height:26px;background:#dcdcdc"></div>
<div class="t" style="left:333px;top:255.07px;font-size:6.5px;line-height:7.80px;color:#999;">&#10010;</div>
<div class="t" style="left:343px;top:255.07px;font-size:6.5px;line-height:7.80px;color:#999;">&#8630;</div>
<div class="a" style="left:223px;top:276px;width:163px;height:8px;background:#fff;border:0.8px solid #aaa"></div>
</div>
<div class="a" style="left:0;top:0;width:1024px;height:630px;clip-path:inset(143.6px 148px 142.5px 438.6px)">
<div class="a" style="left:438.6px;top:143.6px;width:437.4px;height:343.9px;background:#dbe5ef;border:0.8px solid #9fb0c4"></div>
<div class="a" style="left:439.40000000000003px;top:144.4px;width:435.79999999999995px;height:11.6px;background:linear-gradient(#e9f0f7,#d5e0eb)"></div>
<div class="a" style="left:442px;top:147px;width:6px;height:5.5px;background:linear-gradient(135deg,#f7e08a,#e0b840);border-radius:1px;transform:rotate(-12deg)"></div>
<div class="t" style="left:449.6px;top:147.62px;font-size:5.3px;line-height:6.36px;color:#222;">K Mn O4 - 00-001-0725</div>
<div class="a" style="left:831.8000000000001px;top:147px;width:13.2px;height:7.6px;border:0.7px solid #a4b2c2;border-radius:1.5px;background:linear-gradient(#f4f7fa,#dde5ee)"></div>
<svg class="a" style="left:0;top:0" width="1" height="1"><rect x="835.8000000000001" y="150.60000000000002" width="5.2" height="1.6" fill="none" stroke="#6a7888" stroke-width="0.6"/></svg>
<div class="a" style="left:846.4000000000001px;top:147px;width:13.2px;height:7.6px;border:0.7px solid #a4b2c2;border-radius:1.5px;background:linear-gradient(#f4f7fa,#dde5ee)"></div>
<svg class="a" style="left:0;top:0" width="1" height="1"><rect x="850.6000000000001" y="148.8" width="4.8" height="3.8" fill="none" stroke="#6a7888" stroke-width="0.6"/><rect x="851.8000000000001" y="149.8" width="2.4" height="1.8" fill="none" stroke="#6a7888" stroke-width="0.5"/></svg>
<div class="a" style="left:861.0px;top:147px;width:13.2px;height:7.6px;border:0.7px solid #a4b2c2;border-radius:1.5px;background:linear-gradient(#f4f7fa,#dde5ee)"></div>
<svg class="a" style="left:0;top:0" width="1" height="1"><path d="M865.6 149.0L869.6 152.60000000000002M869.6 149.0L865.6 152.60000000000002" stroke="#6a7888" stroke-width="0.7"/></svg>
<div class="a" style="left:441.5px;top:156px;width:432px;height:328.8px;background:#f0f0f0"></div>
<div class="a" style="left:441.5px;top:156px;width:432px;height:8.7px;background:#fff"></div>
<div class="t" style="left:443.5px;top:158.29px;font-size:4.9px;line-height:5.88px;color:#111;">File</div>
<div class="t" style="left:456px;top:158.29px;font-size:4.9px;line-height:5.88px;color:#111;">Plots</div>
<div class="a" style="left:441.5px;top:197.6px;width:432px;height:0.8px;background:#d5d5d5"></div>
<div class="a" style="left:444px;top:168px;width:5px;height:6px;background:#2a60b0;border-radius:0.5px"></div>
<div class="a" style="left:445px;top:168px;width:3px;height:2px;background:#dde"></div>
<div class="t" style="left:451px;top:168.97px;font-size:4.95px;line-height:5.94px;color:#111;">Export</div>
<svg class="a" style="left:469px;top:170.3px" width="3" height="2"><path d="M0 0H3L1.5 1.8Z" fill="#222"/></svg>
<div class="a" style="left:444px;top:180px;width:6px;height:4px;background:#9aa4ae;border-radius:1px"></div>
<div class="a" style="left:445.5px;top:178.5px;width:3px;height:2px;background:#fff;border:0.4px solid #888"></div>
<div class="t" style="left:452px;top:179.77px;font-size:4.95px;line-height:5.94px;color:#111;">Print</div>
<div class="a" style="left:477.8px;top:166.5px;width:0.8px;height:30px;background:#d5d5d5"></div>
<div class="a" style="left:535.6px;top:166.5px;width:0.8px;height:30px;background:#d5d5d5"></div>
<div class="a" style="left:578.7px;top:166.5px;width:0.8px;height:30px;background:#d5d5d5"></div>
<div class="a" style="left:631px;top:166.5px;width:0.8px;height:30px;background:#d5d5d5"></div>
<div class="a" style="left:692.7px;top:166.5px;width:0.8px;height:30px;background:#d5d5d5"></div>
<div class="a" style="left:481.5px;top:168.5px;width:3px;height:5.5px;background:#a8a8a8"></div>
<div class="t" style="left:489px;top:169.17px;font-size:4.95px;line-height:5.94px;color:#999;">Temperature Series</div>
<div class="a" style="left:480.8px;top:179px;width:5.5px;height:5.5px;border-radius:50%;background:radial-gradient(circle at 40% 40%,#f88,#2a5ab8 60%)"></div>
<div class="t" style="left:489px;top:179.77px;font-size:4.95px;line-height:5.94px;color:#111;">Toolbox</div>
<div class="a" style="left:481.5px;top:189.5px;width:3px;height:5.5px;background:#b0b0b0"></div>
<div class="t" style="left:489px;top:190.27px;font-size:4.95px;line-height:5.94px;color:#999;">Property Sheet</div>
<div class="t" style="left:539.5px;top:168.93px;font-size:5.5px;line-height:6.60px;color:#bbb;">&#10022;</div>
<div class="t" style="left:547.6px;top:169.17px;font-size:4.95px;line-height:5.94px;color:#999;">2D Structure</div>
<div class="a" style="left:539.5px;top:179.3px;width:5.5px;height:5.5px;border:1.2px solid #c0392b;background:#f6d0c8"></div>
<div class="t" style="left:547.6px;top:179.77px;font-size:4.95px;line-height:5.94px;color:#111;">3D Structure</div>
<div class="a" style="left:539.5px;top:190px;width:5.5px;height:3.5px;background:#c0392b;border-radius:1px"></div>
<div class="t" style="left:547.6px;top:189.77px;font-size:4.95px;line-height:5.94px;color:#111;">Bonds</div>
<div class="a" style="left:581px;top:168.4px;width:6.5px;height:6.5px;background:#222;border:0.6px solid #777"></div>
<div class="a" style="left:581px;top:179px;width:6.5px;height:6.5px;background:#222;border:0.6px solid #777"></div>
<div class="a" style="left:581px;top:189px;width:6.5px;height:6.5px;background:#222;border:0.6px solid #777"></div>
<div class="t" style="left:590.5px;top:169.17px;font-size:4.95px;line-height:5.94px;color:#111;">SAED Pattern</div>
<svg class="a" style="left:624px;top:170.6px" width="3" height="2"><path d="M0 0H3L1.5 1.8Z" fill="#222"/></svg>
<div class="t" style="left:590.5px;top:179.77px;font-size:4.95px;line-height:5.94px;color:#111;">EBSD Pattern</div>
<svg class="a" style="left:624px;top:181.2px" width="3" height="2"><path d="M0 0H3L1.5 1.8Z" fill="#222"/></svg>
<div class="t" style="left:590.5px;top:189.77px;font-size:4.95px;line-height:5.94px;color:#111;">Ring Pattern</div>
<div class="a" style="left:634.5px;top:168.3px;width:6px;height:6px;background:#e8f4ea;border:0.6px solid #5a9a6a"></div>
<div class="t" style="left:643px;top:169.17px;font-size:4.95px;line-height:5.94px;color:#111;">Simulated Profile</div>
<div class="a" style="left:634.5px;top:179px;width:6px;height:6px;background:#b8b8b8"></div>
<div class="t" style="left:643px;top:179.77px;font-size:4.95px;line-height:5.94px;color:#999;">Raw Diffraction Data</div>
<svg class="a" style="left:445.5px;top:203.2px" width="5.6" height="5.6"><circle cx="2.8" cy="2.8" r="2.4" fill="#fff" stroke="#6a6a6a" stroke-width="0.7"/><circle cx="2.8" cy="2.8" r="1.35" fill="#222"/></svg>
<div class="t" style="left:452.5px;top:203.77px;font-size:4.95px;line-height:5.94px;color:#111;">X-ray diffraction</div>
<div class="t" style="left:452px;top:214.17px;font-size:4.95px;line-height:5.94px;color:#111;">Wavelength:</div>
<div class="a" style="left:482.5px;top:211.5px;width:60.5px;height:8.8px;background:#e6e6e6;border:0.7px solid #c4c4c4"></div>
<div class="t" style="left:484.5px;top:213.67px;font-size:4.95px;line-height:5.94px;color:#111;">Cu K&alpha;1 1.54056 &Aring;</div>
<svg class="a" style="left:537px;top:215px" width="4" height="3"><path d="M0.3 0.5L2 2.2L3.7 0.5" fill="none" stroke="#555" stroke-width="0.6"/></svg>
<svg class="a" style="left:445.5px;top:224.7px" width="5.6" height="5.6"><circle cx="2.8" cy="2.8" r="2.4" fill="#fff" stroke="#c8c8c8" stroke-width="0.7"/></svg>
<div class="t" style="left:452.5px;top:225.27px;font-size:4.95px;line-height:5.94px;color:#aaa;">Neutron diffraction</div>
<svg class="a" style="left:445.5px;top:235.2px" width="5.6" height="5.6"><circle cx="2.8" cy="2.8" r="2.4" fill="#fff" stroke="#6a6a6a" stroke-width="0.7"/></svg>
<div class="t" style="left:452.5px;top:235.77px;font-size:4.95px;line-height:5.94px;color:#111;">Electron diffraction</div>
<div class="a" style="left:547.3px;top:203px;width:0.8px;height:40px;background:#dadada"></div>
<div class="a" style="left:551.5px;top:203.2px;width:5.6px;height:5.6px;border:0.7px solid #7a7a7a;background:#fff"></div>
<svg class="a" style="left:551.5px;top:203.2px" width="5.6" height="5.6"><path d="M1 2.8 L2.2399999999999998 4.592 L4.8 1" fill="none" stroke="#333" stroke-width="0.8"/></svg>
<div class="t" style="left:558.6px;top:203.77px;font-size:4.95px;line-height:5.94px;color:#111;">Simulated profile (Exp-based)</div>
<div class="a" style="left:551.5px;top:213.6px;width:5.6px;height:5.6px;border:0.7px solid #d0d0d0;background:#f6f6f6"></div>
<div class="t" style="left:558.6px;top:214.17px;font-size:4.95px;line-height:5.94px;color:#aaa;">Raw diffraction data</div>
<div class="a" style="left:551.4px;top:224px;width:58px;height:8.6px;background:#e6e6e6;border:0.7px solid #c4c4c4"></div>
<div class="t" style="left:553px;top:226.07px;font-size:4.95px;line-height:5.94px;color:#111;">Fixed Slit Intensity</div>
<svg class="a" style="left:603.5px;top:227.5px" width="4" height="3"><path d="M0.3 0.5L2 2.2L3.7 0.5" fill="none" stroke="#555" stroke-width="0.6"/></svg>
<div class="a" style="left:444.6px;top:245.7px;width:182px;height:85.8px;background:#fff;border:0.7px solid #a8a8a8"></div>
<div class="a" style="left:618px;top:257.6px;width:8.6px;height:73.8px;background:#f0f0f0"></div>
<div class="a" style="left:618.8px;top:266px;width:7px;height:14px;background:#cdcdcd"></div>
<svg class="a" style="left:620.5px;top:260px" width="4" height="3"><path d="M0.3 2.5L2 0.7L3.7 2.5" fill="none" stroke="#555" stroke-width="0.6"/></svg>
<svg class="a" style="left:620.5px;top:326px" width="4" height="3"><path d="M0.3 0.5L2 2.3L3.7 0.5" fill="none" stroke="#555" stroke-width="0.6"/></svg>
<div class="a" style="left:477px;top:245.7px;width:0.6px;height:85.8px;background:#c8c8c8"></div>
<div class="a" style="left:506.6px;top:245.7px;width:0.6px;height:85.8px;background:#c8c8c8"></div>
<div class="a" style="left:532.4px;top:245.7px;width:0.6px;height:85.8px;background:#c8c8c8"></div>
<div class="a" style="left:553.4px;top:245.7px;width:0.6px;height:85.8px;background:#c8c8c8"></div>
<div class="a" style="left:575.6px;top:245.7px;width:0.6px;height:85.8px;background:#c8c8c8"></div>
<div class="a" style="left:596.6px;top:245.7px;width:0.6px;height:85.8px;background:#c8c8c8"></div>
<div class="a" style="left:618px;top:245.7px;width:0.6px;height:85.8px;background:#c8c8c8"></div>
<div class="t" style="right:549.5px;top:249.57px;font-size:4.95px;line-height:5.94px;color:#111;text-align:right;">2&theta; (&deg;)</div>
<div class="t" style="right:520px;top:249.57px;font-size:4.95px;line-height:5.94px;color:#111;text-align:right;">d (&Aring;)</div>
<div class="t" style="right:493.5px;top:249.57px;font-size:4.95px;line-height:5.94px;color:#111;text-align:right;">I</div>
<div class="t" style="left:492.9px;width:100px;text-align:center;top:249.57px;font-size:4.95px;line-height:5.94px;color:#111;">h</div>
<div class="t" style="left:514.5px;width:100px;text-align:center;top:249.57px;font-size:4.95px;line-height:5.94px;color:#111;">k</div>
<div class="t" style="left:536.1px;width:100px;text-align:center;top:249.57px;font-size:4.95px;line-height:5.94px;color:#111;">l</div>
<div class="t" style="left:557.3px;width:100px;text-align:center;top:248.97px;font-size:4.95px;line-height:5.94px;color:#111;">*</div>
<div class="a" style="left:444.6px;top:257.6px;width:173.4px;height:0.6px;background:#c8c8c8"></div>
<div class="t" style="right:549px;top:259.57px;font-size:4.95px;line-height:5.94px;color:#111;text-align:right;">15.53</div>
<div class="t" style="right:519.5px;top:259.57px;font-size:4.95px;line-height:5.94px;color:#111;text-align:right;">5.70</div>
<div class="t" style="right:493px;top:259.57px;font-size:4.95px;line-height:5.94px;color:#111;text-align:right;">8</div>
<div class="t" style="left:492.9px;width:100px;text-align:center;top:259.57px;font-size:4.95px;line-height:5.94px;color:#111;">1</div>
<div class="t" style="left:514.5px;width:100px;text-align:center;top:259.57px;font-size:4.95px;line-height:5.94px;color:#111;">0</div>
<div class="t" style="left:536.1px;width:100px;text-align:center;top:259.57px;font-size:4.95px;line-height:5.94px;color:#111;">1</div>
<div class="a" style="left:444.6px;top:265.8px;width:173.4px;height:0.6px;background:#c8c8c8"></div>
<div class="t" style="right:549px;top:267.77px;font-size:4.95px;line-height:5.94px;color:#111;text-align:right;">19.49</div>
<div class="t" style="right:519.5px;top:267.77px;font-size:4.95px;line-height:5.94px;color:#111;text-align:right;">4.55</div>
<div class="t" style="right:493px;top:267.77px;font-size:4.95px;line-height:5.94px;color:#111;text-align:right;">50</div>
<div class="t" style="left:492.9px;width:100px;text-align:center;top:267.77px;font-size:4.95px;line-height:5.94px;color:#111;">2</div>
<div class="t" style="left:514.5px;width:100px;text-align:center;top:267.77px;font-size:4.95px;line-height:5.94px;color:#111;">0</div>
<div class="t" style="left:536.1px;width:100px;text-align:center;top:267.77px;font-size:4.95px;line-height:5.94px;color:#111;">0</div>
<div class="a" style="left:444.6px;top:274.0px;width:173.4px;height:0.6px;background:#c8c8c8"></div>
<div class="t" style="right:549px;top:275.97px;font-size:4.95px;line-height:5.94px;color:#111;text-align:right;">22.84</div>
<div class="t" style="right:519.5px;top:275.97px;font-size:4.95px;line-height:5.94px;color:#111;text-align:right;">3.89</div>
<div class="t" style="right:493px;top:275.97px;font-size:4.95px;line-height:5.94px;color:#111;text-align:right;">8</div>
<div class="t" style="left:492.9px;width:100px;text-align:center;top:275.97px;font-size:4.95px;line-height:5.94px;color:#111;">2</div>
<div class="t" style="left:514.5px;width:100px;text-align:center;top:275.97px;font-size:4.95px;line-height:5.94px;color:#111;">0</div>
<div class="t" style="left:536.1px;width:100px;text-align:center;top:275.97px;font-size:4.95px;line-height:5.94px;color:#111;">1</div>
<div class="a" style="left:444.6px;top:282.20000000000005px;width:173.4px;height:0.6px;background:#c8c8c8"></div>
<div class="t" style="right:549px;top:284.17px;font-size:4.95px;line-height:5.94px;color:#111;text-align:right;">23.97</div>
<div class="t" style="right:519.5px;top:284.17px;font-size:4.95px;line-height:5.94px;color:#111;text-align:right;">3.71</div>
<div class="t" style="right:493px;top:284.17px;font-size:4.95px;line-height:5.94px;color:#111;text-align:right;">30</div>
<div class="t" style="left:492.9px;width:100px;text-align:center;top:284.17px;font-size:4.95px;line-height:5.94px;color:#111;">0</div>
<div class="t" style="left:514.5px;width:100px;text-align:center;top:284.17px;font-size:4.95px;line-height:5.94px;color:#111;">0</div>
<div class="t" style="left:536.1px;width:100px;text-align:center;top:284.17px;font-size:4.95px;line-height:5.94px;color:#111;">2</div>
<div class="a" style="left:444.6px;top:290.40000000000003px;width:173.4px;height:0.6px;background:#c8c8c8"></div>
<div class="t" style="right:549px;top:292.37px;font-size:4.95px;line-height:5.94px;color:#111;text-align:right;font-weight:bold">24.93</div>
<div class="t" style="right:519.5px;top:292.37px;font-size:4.95px;line-height:5.94px;color:#111;text-align:right;font-weight:bold">3.57</div>
<div class="t" style="right:493px;top:292.37px;font-size:4.95px;line-height:5.94px;color:#111;text-align:right;">60</div>
<div class="t" style="left:492.9px;width:100px;text-align:center;top:292.37px;font-size:4.95px;line-height:5.94px;color:#111;">2</div>
<div class="t" style="left:514.5px;width:100px;text-align:center;top:292.37px;font-size:4.95px;line-height:5.94px;color:#111;">1</div>
<div class="t" style="left:536.1px;width:100px;text-align:center;top:292.37px;font-size:4.95px;line-height:5.94px;color:#111;">0</div>
<div class="a" style="left:444.6px;top:298.6px;width:173.4px;height:0.6px;background:#c8c8c8"></div>
<div class="t" style="right:549px;top:300.57px;font-size:4.95px;line-height:5.94px;color:#111;text-align:right;">25.96</div>
<div class="t" style="right:519.5px;top:300.57px;font-size:4.95px;line-height:5.94px;color:#111;text-align:right;">3.43</div>
<div class="t" style="right:493px;top:300.57px;font-size:4.95px;line-height:5.94px;color:#111;text-align:right;">4</div>
<div class="t" style="left:492.9px;width:100px;text-align:center;top:300.57px;font-size:4.95px;line-height:5.94px;color:#111;">1</div>
<div class="t" style="left:514.5px;width:100px;text-align:center;top:300.57px;font-size:4.95px;line-height:5.94px;color:#111;">0</div>
<div class="t" style="left:536.1px;width:100px;text-align:center;top:300.57px;font-size:4.95px;line-height:5.94px;color:#111;">2</div>
<div class="a" style="left:444.6px;top:306.8px;width:173.4px;height:0.6px;background:#c8c8c8"></div>
<div class="t" style="right:549px;top:308.77px;font-size:4.95px;line-height:5.94px;color:#111;text-align:right;font-weight:bold">27.68</div>
<div class="t" style="right:519.5px;top:308.77px;font-size:4.95px;line-height:5.94px;color:#111;text-align:right;font-weight:bold">3.22</div>
<div class="t" style="right:493px;top:308.77px;font-size:4.95px;line-height:5.94px;color:#111;text-align:right;">100</div>
<div class="t" style="left:492.9px;width:100px;text-align:center;top:308.77px;font-size:4.95px;line-height:5.94px;color:#111;">2</div>
<div class="t" style="left:514.5px;width:100px;text-align:center;top:308.77px;font-size:4.95px;line-height:5.94px;color:#111;">1</div>
<div class="t" style="left:536.1px;width:100px;text-align:center;top:308.77px;font-size:4.95px;line-height:5.94px;color:#111;">1</div>
<div class="a" style="left:444.6px;top:315.0px;width:173.4px;height:0.6px;background:#c8c8c8"></div>
<div class="t" style="right:549px;top:316.97px;font-size:4.95px;line-height:5.94px;color:#111;text-align:right;font-weight:bold">30.27</div>
<div class="t" style="right:519.5px;top:316.97px;font-size:4.95px;line-height:5.94px;color:#111;text-align:right;font-weight:bold">2.95</div>
<div class="t" style="right:493px;top:316.97px;font-size:4.95px;line-height:5.94px;color:#111;text-align:right;">80</div>
<div class="t" style="left:492.9px;width:100px;text-align:center;top:316.97px;font-size:4.95px;line-height:5.94px;color:#111;">1</div>
<div class="t" style="left:514.5px;width:100px;text-align:center;top:316.97px;font-size:4.95px;line-height:5.94px;color:#111;">1</div>
<div class="t" style="left:536.1px;width:100px;text-align:center;top:316.97px;font-size:4.95px;line-height:5.94px;color:#111;">2</div>
<div class="a" style="left:444.6px;top:323.20000000000005px;width:173.4px;height:0.6px;background:#c8c8c8"></div>
<div class="t" style="right:549px;top:325.17px;font-size:4.95px;line-height:5.94px;color:#111;text-align:right;">31.25</div>
<div class="t" style="right:519.5px;top:325.17px;font-size:4.95px;line-height:5.94px;color:#111;text-align:right;">2.86</div>
<div class="t" style="right:493px;top:325.17px;font-size:4.95px;line-height:5.94px;color:#111;text-align:right;">40</div>
<div class="t" style="left:492.9px;width:100px;text-align:center;top:325.17px;font-size:4.95px;line-height:5.94px;color:#111;">0</div>
<div class="t" style="left:514.5px;width:100px;text-align:center;top:325.17px;font-size:4.95px;line-height:5.94px;color:#111;">2</div>
<div class="t" style="left:536.1px;width:100px;text-align:center;top:325.17px;font-size:4.95px;line-height:5.94px;color:#111;">0</div>
<div class="a" style="left:441.5px;top:336.5px;width:432px;height:0.7px;background:#d5d5d5"></div>
<div class="t" style="left:496.3px;top:339.57px;font-size:4.95px;line-height:5.94px;color:#111;">Status:</div>
<div class="t" style="left:538.8px;top:339.57px;font-size:4.95px;line-height:5.94px;color:#2a5db0;">Alternate</div>
<div class="a" style="left:564px;top:338px;width:0.7px;height:8px;background:#ccc"></div>
<div class="t" style="left:568px;top:339.57px;font-size:4.95px;line-height:5.94px;color:#111;">Quality Mark:</div>
<div class="a" style="left:600px;top:339px;width:5px;height:5px;border-radius:50%;background:radial-gradient(circle at 35% 35%,#fff,#e8c020 50%)"></div>
<div class="t" style="left:606px;top:339.57px;font-size:4.95px;line-height:5.94px;color:#2a5db0;">Indexed</div>
<div class="a" style="left:680px;top:337px;width:0.7px;height:9px;background:#ccc"></div>
<div class="t" style="left:496.3px;top:348.37px;font-size:4.95px;line-height:5.94px;color:#111;">Environment</div>
<div class="t" style="left:496.3px;top:361.47px;font-size:4.95px;line-height:5.94px;color:#111;">Phase:</div>
<div class="t" style="left:496.3px;top:371.17px;font-size:4.95px;line-height:5.94px;color:#111;">Chemical Formula:</div>
<div class="t" style="left:496.3px;top:380.77px;font-size:4.95px;line-height:5.94px;color:#111;">Empirical Formula:</div>
<div class="t" style="left:496.3px;top:391.37px;font-size:4.95px;line-height:5.94px;color:#111;">Weight %:</div>
<div class="t" style="left:496.3px;top:400.27px;font-size:4.95px;line-height:5.94px;color:#111;">Atomic %:</div>
<div class="t" style="left:496.3px;top:413.27px;font-size:4.95px;line-height:5.94px;color:#111;">Compound Name:</div>
<div class="t" style="left:496.3px;top:422.97px;font-size:4.95px;line-height:5.94px;color:#111;">Mineral Name:</div>
<div class="t" style="left:496.3px;top:432.17px;font-size:4.95px;line-height:5.94px;color:#111;">CAS Number:</div>
<div class="t" style="left:496.3px;top:445.27px;font-size:4.95px;line-height:5.94px;color:#111;">Entry Date:</div>
<div class="t" style="left:496.3px;top:454.37px;font-size:4.95px;line-height:5.94px;color:#111;">Modification Date:</div>
<div class="a" style="left:441.5px;top:357px;width:90px;height:0.7px;background:#d5d5d5"></div>
<div class="a" style="left:441.5px;top:409px;width:90px;height:0.7px;background:#d5d5d5"></div>
<div class="a" style="left:441.5px;top:441px;width:90px;height:0.7px;background:#d5d5d5"></div>
<div class="a" style="left:652.5px;top:204.6px;width:206.10000000000002px;height:96.70000000000002px;background:#fff;border:0.6px solid #d0d0d0"></div>
<div class="a" style="left:652.5px;top:300.8px;width:206.10000000000002px;height:2.2px;background:#d6d6d6"></div>
<div class="a" style="left:652.5px;top:302.8px;width:206.10000000000002px;height:11.3px;background:#fff;border:0.6px solid #d0d0d0"></div>
<svg class="a" style="left:0;top:0" width="1024" height="630"><line x1="664.7" y1="204.6" x2="664.7" y2="300.3" stroke="#e2e2e2" stroke-width="0.5" stroke-dasharray="1,1"/><line x1="664.7" y1="302.8" x2="664.7" y2="314" stroke="#e2e2e2" stroke-width="0.5" stroke-dasharray="1,1"/><line x1="679.085" y1="204.6" x2="679.085" y2="300.3" stroke="#e2e2e2" stroke-width="0.5" stroke-dasharray="1,1"/><line x1="679.085" y1="302.8" x2="679.085" y2="314" stroke="#e2e2e2" stroke-width="0.5" stroke-dasharray="1,1"/><line x1="693.47" y1="204.6" x2="693.47" y2="300.3" stroke="#e2e2e2" stroke-width="0.5" stroke-dasharray="1,1"/><line x1="693.47" y1="302.8" x2="693.47" y2="314" stroke="#e2e2e2" stroke-width="0.5" stroke-dasharray="1,1"/><line x1="707.855" y1="204.6" x2="707.855" y2="300.3" stroke="#e2e2e2" stroke-width="0.5" stroke-dasharray="1,1"/><line x1="707.855" y1="302.8" x2="707.855" y2="314" stroke="#e2e2e2" stroke-width="0.5" stroke-dasharray="1,1"/><line x1="722.24" y1="204.6" x2="722.24" y2="300.3" stroke="#e2e2e2" stroke-width="0.5" stroke-dasharray="1,1"/><line x1="722.24" y1="302.8" x2="722.24" y2="314" stroke="#e2e2e2" stroke-width="0.5" stroke-dasharray="1,1"/><line x1="736.625" y1="204.6" x2="736.625" y2="300.3" stroke="#e2e2e2" stroke-width="0.5" stroke-dasharray="1,1"/><line x1="736.625" y1="302.8" x2="736.625" y2="314" stroke="#e2e2e2" stroke-width="0.5" stroke-dasharray="1,1"/><line x1="751.01" y1="204.6" x2="751.01" y2="300.3" stroke="#e2e2e2" stroke-width="0.5" stroke-dasharray="1,1"/><line x1="751.01" y1="302.8" x2="751.01" y2="314" stroke="#e2e2e2" stroke-width="0.5" stroke-dasharray="1,1"/><line x1="765.395" y1="204.6" x2="765.395" y2="300.3" stroke="#e2e2e2" stroke-width="0.5" stroke-dasharray="1,1"/><line x1="765.395" y1="302.8" x2="765.395" y2="314" stroke="#e2e2e2" stroke-width="0.5" stroke-dasharray="1,1"/><line x1="779.78" y1="204.6" x2="779.78" y2="300.3" stroke="#e2e2e2" stroke-width="0.5" stroke-dasharray="1,1"/><line x1="779.78" y1="302.8" x2="779.78" y2="314" stroke="#e2e2e2" stroke-width="0.5" stroke-dasharray="1,1"/><line x1="794.1650000000001" y1="204.6" x2="794.1650000000001" y2="300.3" stroke="#e2e2e2" stroke-width="0.5" stroke-dasharray="1,1"/><line x1="794.1650000000001" y1="302.8" x2="794.1650000000001" y2="314" stroke="#e2e2e2" stroke-width="0.5" stroke-dasharray="1,1"/><line x1="808.5500000000001" y1="204.6" x2="808.5500000000001" y2="300.3" stroke="#e2e2e2" stroke-width="0.5" stroke-dasharray="1,1"/><line x1="808.5500000000001" y1="302.8" x2="808.5500000000001" y2="314" stroke="#e2e2e2" stroke-width="0.5" stroke-dasharray="1,1"/><line x1="822.9350000000001" y1="204.6" x2="822.9350000000001" y2="300.3" stroke="#e2e2e2" stroke-width="0.5" stroke-dasharray="1,1"/><line x1="822.9350000000001" y1="302.8" x2="822.9350000000001" y2="314" stroke="#e2e2e2" stroke-width="0.5" stroke-dasharray="1,1"/><line x1="837.32" y1="204.6" x2="837.32" y2="300.3" stroke="#e2e2e2" stroke-width="0.5" stroke-dasharray="1,1"/><line x1="837.32" y1="302.8" x2="837.32" y2="314" stroke="#e2e2e2" stroke-width="0.5" stroke-dasharray="1,1"/><line x1="851.705" y1="204.6" x2="851.705" y2="300.3" stroke="#e2e2e2" stroke-width="0.5" stroke-dasharray="1,1"/><line x1="851.705" y1="302.8" x2="851.705" y2="314" stroke="#e2e2e2" stroke-width="0.5" stroke-dasharray="1,1"/><line x1="652.5" y1="290.90000000000003" x2="858.6" y2="290.90000000000003" stroke="#e2e2e2" stroke-width="0.5" stroke-dasharray="1,1"/><line x1="652.5" y1="281.5" x2="858.6" y2="281.5" stroke="#e2e2e2" stroke-width="0.5" stroke-dasharray="1,1"/><line x1="652.5" y1="272.1" x2="858.6" y2="272.1" stroke="#e2e2e2" stroke-width="0.5" stroke-dasharray="1,1"/><line x1="652.5" y1="262.70000000000005" x2="858.6" y2="262.70000000000005" stroke="#e2e2e2" stroke-width="0.5" stroke-dasharray="1,1"/><line x1="652.5" y1="253.3" x2="858.6" y2="253.3" stroke="#e2e2e2" stroke-width="0.5" stroke-dasharray="1,1"/><line x1="652.5" y1="243.9" x2="858.6" y2="243.9" stroke="#e2e2e2" stroke-width="0.5" stroke-dasharray="1,1"/><line x1="652.5" y1="234.5" x2="858.6" y2="234.5" stroke="#e2e2e2" stroke-width="0.5" stroke-dasharray="1,1"/><line x1="652.5" y1="225.10000000000002" x2="858.6" y2="225.10000000000002" stroke="#e2e2e2" stroke-width="0.5" stroke-dasharray="1,1"/><line x1="652.5" y1="215.70000000000002" x2="858.6" y2="215.70000000000002" stroke="#e2e2e2" stroke-width="0.5" stroke-dasharray="1,1"/><line x1="652.5" y1="206.3" x2="858.6" y2="206.3" stroke="#e2e2e2" stroke-width="0.5" stroke-dasharray="1,1"/><line x1="652.5" y1="300.3" x2="858.6" y2="300.3" stroke="#f07070" stroke-width="0.8"/><path d="M679.8 300.3 L680.25 292.78000000000003 L681.55 292.78000000000003 L682.0 300.3Z" fill="#f06a6a"/><line x1="680.9" y1="303.5" x2="680.9" y2="314" stroke="#f06a6a" stroke-width="1.3"/><path d="M691.0 300.3 L691.45 253.3 L692.75 253.3 L693.2 300.3Z" fill="#f06a6a"/><line x1="692.1" y1="303.5" x2="692.1" y2="314" stroke="#f06a6a" stroke-width="1.3"/><path d="M700.6 300.3 L701.0500000000001 292.78000000000003 L702.35 292.78000000000003 L702.8000000000001 300.3Z" fill="#f06a6a"/><line x1="701.7" y1="303.5" x2="701.7" y2="314" stroke="#f06a6a" stroke-width="1.3"/><path d="M703.9 300.3 L704.35 272.1 L705.65 272.1 L706.1 300.3Z" fill="#f06a6a"/><line x1="705" y1="303.5" x2="705" y2="314" stroke="#f06a6a" stroke-width="1.3"/><path d="M706.5 300.3 L706.95 243.9 L708.25 243.9 L708.7 300.3Z" fill="#f06a6a"/><line x1="707.6" y1="303.5" x2="707.6" y2="314" stroke="#f06a6a" stroke-width="1.3"/><path d="M709.5 300.3 L709.95 296.54 L711.25 296.54 L711.7 300.3Z" fill="#f06a6a"/><line x1="710.6" y1="303.5" x2="710.6" y2="314" stroke="#f06a6a" stroke-width="1.3"/><path d="M714.6 300.3 L715.0500000000001 206.3 L716.35 206.3 L716.8000000000001 300.3Z" fill="#f06a6a"/><line x1="715.7" y1="303.5" x2="715.7" y2="314" stroke="#f06a6a" stroke-width="1.3"/><path d="M721.9 300.3 L722.35 225.10000000000002 L723.65 225.10000000000002 L724.1 300.3Z" fill="#f06a6a"/><line x1="723" y1="303.5" x2="723" y2="314" stroke="#f06a6a" stroke-width="1.3"/><path d="M724.6999999999999 300.3 L725.15 262.70000000000005 L726.4499999999999 262.70000000000005 L726.9 300.3Z" fill="#f06a6a"/><line x1="725.8" y1="303.5" x2="725.8" y2="314" stroke="#f06a6a" stroke-width="1.3"/><path d="M735.6999999999999 300.3 L736.15 272.1 L737.4499999999999 272.1 L737.9 300.3Z" fill="#f06a6a"/><line x1="736.8" y1="303.5" x2="736.8" y2="314" stroke="#f06a6a" stroke-width="1.3"/><path d="M753.4 300.3 L753.85 243.9 L755.15 243.9 L755.6 300.3Z" fill="#f06a6a"/><line x1="754.5" y1="303.5" x2="754.5" y2="314" stroke="#f06a6a" stroke-width="1.3"/><path d="M763.6 300.3 L764.0500000000001 298.42 L765.35 298.42 L765.8000000000001 300.3Z" fill="#f06a6a"/><line x1="764.7" y1="303.5" x2="764.7" y2="314" stroke="#f06a6a" stroke-width="1.3"/><path d="M770.4 300.3 L770.85 296.54 L772.15 296.54 L772.6 300.3Z" fill="#f06a6a"/><line x1="771.5" y1="303.5" x2="771.5" y2="314" stroke="#f06a6a" stroke-width="1.3"/><path d="M777.5 300.3 L777.95 281.5 L779.25 281.5 L779.7 300.3Z" fill="#f06a6a"/><line x1="778.6" y1="303.5" x2="778.6" y2="314" stroke="#f06a6a" stroke-width="1.3"/><path d="M786.1999999999999 300.3 L786.65 290.90000000000003 L787.9499999999999 290.90000000000003 L788.4 300.3Z" fill="#f06a6a"/><line x1="787.3" y1="303.5" x2="787.3" y2="314" stroke="#f06a6a" stroke-width="1.3"/><path d="M792.3 300.3 L792.75 292.78000000000003 L794.05 292.78000000000003 L794.5 300.3Z" fill="#f06a6a"/><line x1="793.4" y1="303.5" x2="793.4" y2="314" stroke="#f06a6a" stroke-width="1.3"/><path d="M800.6 300.3 L801.0500000000001 294.66 L802.35 294.66 L802.8000000000001 300.3Z" fill="#f06a6a"/><line x1="801.7" y1="303.5" x2="801.7" y2="314" stroke="#f06a6a" stroke-width="1.3"/><path d="M807.6999999999999 300.3 L808.15 298.42 L809.4499999999999 298.42 L809.9 300.3Z" fill="#f06a6a"/><line x1="808.8" y1="303.5" x2="808.8" y2="314" stroke="#f06a6a" stroke-width="1.3"/><path d="M811.8 300.3 L812.25 298.42 L813.55 298.42 L814.0 300.3Z" fill="#f06a6a"/><line x1="812.9" y1="303.5" x2="812.9" y2="314" stroke="#f06a6a" stroke-width="1.3"/><path d="M815.3 300.3 L815.75 296.54 L817.05 296.54 L817.5 300.3Z" fill="#f06a6a"/><line x1="816.4" y1="303.5" x2="816.4" y2="314" stroke="#f06a6a" stroke-width="1.3"/><path d="M819.4 300.3 L819.85 296.54 L821.15 296.54 L821.6 300.3Z" fill="#f06a6a"/><line x1="820.5" y1="303.5" x2="820.5" y2="314" stroke="#f06a6a" stroke-width="1.3"/><path d="M822.9 300.3 L823.35 296.54 L824.65 296.54 L825.1 300.3Z" fill="#f06a6a"/><line x1="824" y1="303.5" x2="824" y2="314" stroke="#f06a6a" stroke-width="1.3"/><path d="M828.8 300.3 L829.25 296.54 L830.55 296.54 L831.0 300.3Z" fill="#f06a6a"/><line x1="829.9" y1="303.5" x2="829.9" y2="314" stroke="#f06a6a" stroke-width="1.3"/></svg>
<div class="t" style="right:373.5px;top:297.82px;font-size:5.5px;line-height:6.60px;color:#222;text-align:right;">0</div>
<div class="t" style="right:373.5px;top:288.43px;font-size:5.5px;line-height:6.60px;color:#222;text-align:right;">10</div>
<div class="t" style="right:373.5px;top:279.02px;font-size:5.5px;line-height:6.60px;color:#222;text-align:right;">20</div>
<div class="t" style="right:373.5px;top:269.62px;font-size:5.5px;line-height:6.60px;color:#222;text-align:right;">30</div>
<div class="t" style="right:373.5px;top:260.23px;font-size:5.5px;line-height:6.60px;color:#222;text-align:right;">40</div>
<div class="t" style="right:373.5px;top:250.83px;font-size:5.5px;line-height:6.60px;color:#222;text-align:right;">50</div>
<div class="t" style="right:373.5px;top:241.43px;font-size:5.5px;line-height:6.60px;color:#222;text-align:right;">60</div>
<div class="t" style="right:373.5px;top:232.03px;font-size:5.5px;line-height:6.60px;color:#222;text-align:right;">70</div>
<div class="t" style="right:373.5px;top:222.63px;font-size:5.5px;line-height:6.60px;color:#222;text-align:right;">80</div>
<div class="t" style="right:373.5px;top:213.23px;font-size:5.5px;line-height:6.60px;color:#222;text-align:right;">90</div>
<div class="t" style="right:373.5px;top:203.83px;font-size:5.5px;line-height:6.60px;color:#222;text-align:right;">100</div>
<div class="t" style="left:614.7px;width:100px;text-align:center;top:318.22px;font-size:5.3px;line-height:6.36px;color:#222;">10</div>
<div class="t" style="left:629.085px;width:100px;text-align:center;top:318.22px;font-size:5.3px;line-height:6.36px;color:#222;">15</div>
<div class="t" style="left:643.47px;width:100px;text-align:center;top:318.22px;font-size:5.3px;line-height:6.36px;color:#222;">20</div>
<div class="t" style="left:657.855px;width:100px;text-align:center;top:318.22px;font-size:5.3px;line-height:6.36px;color:#222;">25</div>
<div class="t" style="left:672.24px;width:100px;text-align:center;top:318.22px;font-size:5.3px;line-height:6.36px;color:#222;">30</div>
<div class="t" style="left:686.625px;width:100px;text-align:center;top:318.22px;font-size:5.3px;line-height:6.36px;color:#222;">35</div>
<div class="t" style="left:701.01px;width:100px;text-align:center;top:318.22px;font-size:5.3px;line-height:6.36px;color:#222;">40</div>
<div class="t" style="left:715.395px;width:100px;text-align:center;top:318.22px;font-size:5.3px;line-height:6.36px;color:#222;">45</div>
<div class="t" style="left:729.78px;width:100px;text-align:center;top:318.22px;font-size:5.3px;line-height:6.36px;color:#222;">50</div>
<div class="t" style="left:744.1650000000001px;width:100px;text-align:center;top:318.22px;font-size:5.3px;line-height:6.36px;color:#222;">55</div>
<div class="t" style="left:758.5500000000001px;width:100px;text-align:center;top:318.22px;font-size:5.3px;line-height:6.36px;color:#222;">60</div>
<div class="t" style="left:772.9350000000001px;width:100px;text-align:center;top:318.22px;font-size:5.3px;line-height:6.36px;color:#222;">65</div>
<div class="t" style="left:787.32px;width:100px;text-align:center;top:318.22px;font-size:5.3px;line-height:6.36px;color:#222;">70</div>
<div class="t" style="left:801.705px;width:100px;text-align:center;top:318.22px;font-size:5.3px;line-height:6.36px;color:#222;">75</div>
<div class="t" style="left:705.5px;width:100px;text-align:center;top:326.77px;font-size:4.95px;line-height:5.94px;color:#222;">2&theta; (&deg;)</div>
<div class="t" style="left:614px;top:249px;width:40px;text-align:center;font-size:5.3px;line-height:6px;transform:rotate(-90deg);color:#222">Intensity</div>
<svg class="a" style="left:863px;top:263px" width="5" height="8"><path d="M4 0.8L1 4L4 7.2" fill="none" stroke="#1a6ed8" stroke-width="1.6"/></svg>
</div>
<div class="a" style="left:0;top:0;width:1024px;height:630px;clip-path:inset(278.8px 525.8px 26.399999999999977px 115px)">
<div class="a" style="left:115px;top:278.8px;width:383.2px;height:324.8px;background:#dbe5ef;border:0.8px solid #9fb0c4"></div>
<div class="a" style="left:115.8px;top:279.6px;width:381.59999999999997px;height:11px;background:linear-gradient(#e9f0f7,#d5e0eb)"></div>
<div class="a" style="left:119.5px;top:281.5px;width:6px;height:6px;border:1.3px solid #c0392b;border-radius:1px;background:#f6d0c8"></div>
<div class="t" style="left:126px;top:282.20px;font-size:5.33px;line-height:6.40px;color:#222;">K Mn O4 - 00-001-0725</div>
<div class="a" style="left:453.09999999999997px;top:281.2px;width:13.2px;height:7.6px;border:0.7px solid #a4b2c2;border-radius:1.5px;background:linear-gradient(#f4f7fa,#dde5ee)"></div>
<svg class="a" style="left:0;top:0" width="1" height="1"><rect x="457.09999999999997" y="284.8" width="5.2" height="1.6" fill="none" stroke="#6a7888" stroke-width="0.6"/></svg>
<div class="a" style="left:467.70000000000005px;top:281.2px;width:13.2px;height:7.6px;border:0.7px solid #a4b2c2;border-radius:1.5px;background:linear-gradient(#f4f7fa,#dde5ee)"></div>
<svg class="a" style="left:0;top:0" width="1" height="1"><rect x="471.9000000000001" y="283.0" width="4.8" height="3.8" fill="none" stroke="#6a7888" stroke-width="0.6"/><rect x="473.1000000000001" y="284.0" width="2.4" height="1.8" fill="none" stroke="#6a7888" stroke-width="0.5"/></svg>
<div class="a" style="left:482.3px;top:281.2px;width:13.2px;height:7.6px;border:0.7px solid #a4b2c2;border-radius:1.5px;background:linear-gradient(#f4f7fa,#dde5ee)"></div>
<svg class="a" style="left:0;top:0" width="1" height="1"><path d="M486.90000000000003 283.2L490.90000000000003 286.8M490.90000000000003 283.2L486.90000000000003 286.8" stroke="#6a7888" stroke-width="0.7"/></svg>
<div class="a" style="left:118.5px;top:290px;width:376.5px;height:310.8px;background:#f0f0f0"></div>
<div class="a" style="left:118.5px;top:290px;width:376.5px;height:9px;background:#fff"></div>
<div class="t" style="left:121px;top:292.80px;font-size:4.9px;line-height:5.88px;color:#111;">File</div>
<div class="t" style="left:122px;top:305.84px;font-size:4.8px;line-height:5.76px;color:#111;">Unit cell:</div>
<div class="a" style="left:142.8px;top:303.2px;width:14.0px;height:8.8px;background:#fff;border:0.7px solid #b9b9b9"></div>
<div class="t" style="left:144.8px;top:305.44px;font-size:4.8px;line-height:5.76px;color:#111;">1</div>
<svg class="a" style="left:151.8px;top:304px" width="4" height="7"><path d="M0.5 2.7L2 1L3.5 2.7Z M0.5 4.3L2 6L3.5 4.3Z" fill="#444"/></svg>
<div class="a" style="left:151.20000000000002px;top:303.8px;width:0.5px;height:7.6px;background:#ccc"></div>
<div class="a" style="left:159.3px;top:303.2px;width:14.0px;height:8.8px;background:#fff;border:0.7px solid #b9b9b9"></div>
<div class="t" style="left:161.3px;top:305.44px;font-size:4.8px;line-height:5.76px;color:#111;">1</div>
<svg class="a" style="left:168.3px;top:304px" width="4" height="7"><path d="M0.5 2.7L2 1L3.5 2.7Z M0.5 4.3L2 6L3.5 4.3Z" fill="#444"/></svg>
<div class="a" style="left:167.70000000000002px;top:303.8px;width:0.5px;height:7.6px;background:#ccc"></div>
<div class="a" style="left:175.6px;top:303.2px;width:14.200000000000017px;height:8.8px;background:#fff;border:0.7px solid #b9b9b9"></div>
<div class="t" style="left:177.6px;top:305.44px;font-size:4.8px;line-height:5.76px;color:#111;">1</div>
<svg class="a" style="left:184.8px;top:304px" width="4" height="7"><path d="M0.5 2.7L2 1L3.5 2.7Z M0.5 4.3L2 6L3.5 4.3Z" fill="#444"/></svg>
<div class="a" style="left:184.20000000000002px;top:303.8px;width:0.5px;height:7.6px;background:#ccc"></div>
<div class="a" style="left:122.6px;top:317.8px;width:5.6px;height:5.6px;border:0.7px solid #7a7a7a;background:#fff"></div>
<div class="t" style="left:130px;top:318.44px;font-size:4.8px;line-height:5.76px;color:#111;">Show atom labels</div>
<div class="a" style="left:172.8px;top:317.8px;width:5.6px;height:5.6px;border:0.7px solid #7a7a7a;background:#fff"></div>
<div class="t" style="left:180.3px;top:318.44px;font-size:4.8px;line-height:5.76px;color:#111;">Show polyhedra</div>
<div class="a" style="left:220.3px;top:302px;width:0.8px;height:25px;background:#d7d7d7"></div>
<div class="t" style="left:224px;top:311.84px;font-size:4.8px;line-height:5.76px;color:#111;">Max bonding radius:</div>
<div class="a" style="left:276px;top:308.6px;width:123.5px;height:1.3px;background:#dadada;border-top:0.5px solid #c4c4c4"></div>
<div class="a" style="left:276.5px;top:313.5px;width:0.6px;height:2px;background:#aaa"></div>
<div class="t" style="left:226.5px;width:100px;text-align:center;top:318.44px;font-size:4.8px;line-height:5.76px;color:#111;">0%</div>
<div class="a" style="left:317.5px;top:313.5px;width:0.6px;height:2px;background:#aaa"></div>
<div class="t" style="left:267.5px;width:100px;text-align:center;top:318.44px;font-size:4.8px;line-height:5.76px;color:#111;">50%</div>
<div class="a" style="left:358.3px;top:313.5px;width:0.6px;height:2px;background:#aaa"></div>
<div class="t" style="left:308.3px;width:100px;text-align:center;top:318.44px;font-size:4.8px;line-height:5.76px;color:#111;">100%</div>
<div class="a" style="left:399px;top:313.5px;width:0.6px;height:2px;background:#aaa"></div>
<div class="t" style="left:349px;width:100px;text-align:center;top:318.44px;font-size:4.8px;line-height:5.76px;color:#111;">150%</div>
<svg class="a" style="left:368px;top:304.5px" width="6" height="9"><path d="M0.3 0.3H5.7V6L3 8.6L0.3 6Z" fill="#1878d8" stroke="#0a58a8" stroke-width="0.5"/></svg>
<div class="a" style="left:409.7px;top:302px;width:0.8px;height:25px;background:#d7d7d7"></div>
<div class="t" style="left:414px;top:305.44px;font-size:4.8px;line-height:5.76px;color:#999;">Subsystem:</div>
<div class="a" style="left:441.8px;top:303px;width:12.8px;height:9px;background:#e2e2e2;border:0.6px solid #cfcfcf"></div>
<svg class="a" style="left:446px;top:307px" width="4" height="3"><path d="M0.3 0.5L2 2.2L3.7 0.5" fill="none" stroke="#999" stroke-width="0.6"/></svg>
<div class="a" style="left:414.4px;top:315px;width:38.3px;height:9.8px;background:#dcdcdc;border:0.6px solid #d0d0d0"></div>
<div class="t" style="left:383.5px;width:100px;text-align:center;top:317.84px;font-size:4.8px;line-height:5.76px;color:#999;">Modulation</div>
<div class="a" style="left:456.5px;top:315px;width:35.5px;height:9.8px;background:#dcdcdc;border:0.6px solid #d0d0d0"></div>
<div class="t" style="left:424.2px;width:100px;text-align:center;top:317.84px;font-size:4.8px;line-height:5.76px;color:#999;">Animation</div>
<div class="a" style="left:118.5px;top:329.2px;width:376.5px;height:0.7px;background:#cfcfcf"></div>
<div class="a" style="left:121.8px;top:331.6px;width:6px;height:6px;border-radius:50%;background:#1c72d4"></div>
<div class="t" style="left:74.8px;width:100px;text-align:center;top:332.68px;font-size:4.5px;line-height:5.40px;color:#fff;font-weight:bold">i</div>
<div class="t" style="left:128.9px;top:332.35px;font-size:5.0px;line-height:6.00px;color:#111;">Atomic parameters are cross-referenced from PDF entry 04-008-2764</div>
<div class="a" style="left:118.5px;top:339.7px;width:376.5px;height:261.4px;background:#000"></div>
<svg class="a" style="left:0;top:0" width="1024" height="630" viewBox="0 0 1024 630"><defs><radialGradient id="gK" cx="0.35" cy="0.32" r="0.7"><stop offset="0" stop-color="#e6c8ff"/><stop offset="0.18" stop-color="#a25ad8"/><stop offset="0.7" stop-color="#7a34b0"/><stop offset="1" stop-color="#4a1a70"/></radialGradient><radialGradient id="gM" cx="0.35" cy="0.32" r="0.7"><stop offset="0" stop-color="#e8e0f4"/><stop offset="0.2" stop-color="#9e8cc4"/><stop offset="0.75" stop-color="#7a6aa0"/><stop offset="1" stop-color="#4a4068"/></radialGradient><radialGradient id="gO" cx="0.35" cy="0.32" r="0.7"><stop offset="0" stop-color="#ffb0b0"/><stop offset="0.2" stop-color="#ff2020"/><stop offset="0.7" stop-color="#d80000"/><stop offset="1" stop-color="#800000"/></radialGradient></defs><line x1="191.1" y1="435.7" x2="391.1" y2="441.4" stroke="#d8d8d8" stroke-width="0.7"/><line x1="218.7" y1="379.5" x2="418.7" y2="385.9" stroke="#d8d8d8" stroke-width="0.7"/><line x1="191.1" y1="435.7" x2="218.7" y2="379.5" stroke="#d8d8d8" stroke-width="0.7"/><line x1="391.1" y1="441.4" x2="395.2" y2="562" stroke="#d8d8d8" stroke-width="0.7"/><line x1="418.7" y1="385.9" x2="422.9" y2="506.5" stroke="#d8d8d8" stroke-width="0.7"/><line x1="391.1" y1="441.4" x2="418.7" y2="385.9" stroke="#d8d8d8" stroke-width="0.7"/><line x1="395.2" y1="562" x2="194.3" y2="555.7" stroke="#d8d8d8" stroke-width="0.7"/><line x1="422.9" y1="506.5" x2="222.9" y2="499.5" stroke="#d8d8d8" stroke-width="0.7"/><line x1="395.2" y1="562" x2="422.9" y2="506.5" stroke="#d8d8d8" stroke-width="0.7"/><line x1="194.3" y1="555.7" x2="191.1" y2="435.7" stroke="#d8d8d8" stroke-width="0.7"/><line x1="222.9" y1="499.5" x2="218.7" y2="379.5" stroke="#d8d8d8" stroke-width="0.7"/><line x1="194.3" y1="555.7" x2="222.9" y2="499.5" stroke="#d8d8d8" stroke-width="0.7"/><circle cx="251.4" cy="419.8" r="14" fill="url(#gK)"/><circle cx="346.7" cy="432.9" r="14" fill="url(#gK)"/><line x1="211.7" y1="448.7" x2="211.7" y2="438.4" stroke="#8a7ab0" stroke-width="3.6"/><line x1="211.7" y1="438.4" x2="211.7" y2="428.1" stroke="#e00000" stroke-width="3.6"/><line x1="211.7" y1="448.7" x2="226.8" y2="444.75" stroke="#8a7ab0" stroke-width="3.6"/><line x1="226.8" y1="444.75" x2="241.9" y2="440.8" stroke="#e00000" stroke-width="3.6"/><line x1="211.7" y1="448.7" x2="212.2" y2="466.0" stroke="#8a7ab0" stroke-width="3.6"/><line x1="212.2" y1="466.0" x2="212.7" y2="483.3" stroke="#e00000" stroke-width="3.6"/><line x1="309.2" y1="458.3" x2="312.4" y2="441.15" stroke="#8a7ab0" stroke-width="3.6"/><line x1="312.4" y1="441.15" x2="315.6" y2="424" stroke="#e00000" stroke-width="3.6"/><line x1="309.2" y1="458.3" x2="291.9" y2="460.5" stroke="#8a7ab0" stroke-width="3.6"/><line x1="291.9" y1="460.5" x2="274.6" y2="462.7" stroke="#e00000" stroke-width="3.6"/><line x1="309.2" y1="458.3" x2="319.2" y2="463.05" stroke="#8a7ab0" stroke-width="3.6"/><line x1="319.2" y1="463.05" x2="329.2" y2="467.8" stroke="#e00000" stroke-width="3.6"/><line x1="309.2" y1="458.3" x2="302.1" y2="460.15" stroke="#8a7ab0" stroke-width="3.6"/><line x1="302.1" y1="460.15" x2="295" y2="462" stroke="#e00000" stroke-width="3.6"/><line x1="303.2" y1="482.7" x2="293.2" y2="478.25" stroke="#8a7ab0" stroke-width="3.6"/><line x1="293.2" y1="478.25" x2="283.2" y2="473.8" stroke="#e00000" stroke-width="3.6"/><line x1="303.2" y1="482.7" x2="310.15" y2="481.1" stroke="#8a7ab0" stroke-width="3.6"/><line x1="310.15" y1="481.1" x2="317.1" y2="479.5" stroke="#e00000" stroke-width="3.6"/><line x1="303.2" y1="482.7" x2="320.65" y2="481.1" stroke="#8a7ab0" stroke-width="3.6"/><line x1="320.65" y1="481.1" x2="338.1" y2="479.5" stroke="#e00000" stroke-width="3.6"/><line x1="303.2" y1="482.7" x2="300.35" y2="500.15" stroke="#8a7ab0" stroke-width="3.6"/><line x1="300.35" y1="500.15" x2="297.5" y2="517.6" stroke="#e00000" stroke-width="3.6"/><line x1="400.6" y1="492.2" x2="400.15" y2="475.25" stroke="#8a7ab0" stroke-width="3.6"/><line x1="400.15" y1="475.25" x2="399.7" y2="458.3" stroke="#e00000" stroke-width="3.6"/><line x1="400.6" y1="492.2" x2="386.0" y2="496.5" stroke="#8a7ab0" stroke-width="3.6"/><line x1="386.0" y1="496.5" x2="371.4" y2="500.8" stroke="#e00000" stroke-width="3.6"/><line x1="400.6" y1="492.2" x2="400.95000000000005" y2="503.0" stroke="#8a7ab0" stroke-width="3.6"/><line x1="400.95000000000005" y1="503.0" x2="401.3" y2="513.8" stroke="#e00000" stroke-width="3.6"/><circle cx="211.7" cy="428.1" r="7.3" fill="url(#gO)"/><circle cx="241.9" cy="440.8" r="7.3" fill="url(#gO)"/><circle cx="212.7" cy="483.3" r="7.3" fill="url(#gO)"/><circle cx="229.8" cy="492.9" r="7.3" fill="url(#gO)"/><circle cx="211.7" cy="448.7" r="10.2" fill="url(#gM)"/><circle cx="315.6" cy="424" r="7.3" fill="url(#gO)"/><circle cx="274.6" cy="462.7" r="7.3" fill="url(#gO)"/><circle cx="329.2" cy="467.8" r="7.3" fill="url(#gO)"/><circle cx="295" cy="462" r="7.3" fill="url(#gO)"/><circle cx="309.2" cy="458.3" r="10.2" fill="url(#gM)"/><circle cx="283.2" cy="473.8" r="7.3" fill="url(#gO)"/><circle cx="317.1" cy="479.5" r="7.3" fill="url(#gO)"/><circle cx="338.1" cy="479.5" r="7.3" fill="url(#gO)"/><circle cx="297.5" cy="517.6" r="7.3" fill="url(#gO)"/><circle cx="303.2" cy="482.7" r="10.2" fill="url(#gM)"/><circle cx="382.5" cy="449.4" r="7.3" fill="url(#gO)"/><circle cx="399.7" cy="458.3" r="7.3" fill="url(#gO)"/><circle cx="371.4" cy="500.8" r="7.3" fill="url(#gO)"/><circle cx="401.3" cy="513.8" r="7.3" fill="url(#gO)"/><circle cx="400.6" cy="492.2" r="10.2" fill="url(#gM)"/><circle cx="329.2" cy="467.8" r="7.3" fill="url(#gO)"/><circle cx="317.1" cy="479.5" r="7.3" fill="url(#gO)"/><circle cx="338.1" cy="479.5" r="7.3" fill="url(#gO)"/><circle cx="297.5" cy="517.6" r="7.3" fill="url(#gO)"/><circle cx="212.7" cy="483.3" r="7.3" fill="url(#gO)"/><circle cx="371.4" cy="500.8" r="7.3" fill="url(#gO)"/><circle cx="401.3" cy="513.8" r="7.3" fill="url(#gO)"/><circle cx="266.3" cy="508.7" r="14" fill="url(#gK)"/><circle cx="361.6" cy="521.7" r="14" fill="url(#gK)"/><line x1="141" y1="579.5" x2="141" y2="565" stroke="#1a8a1a" stroke-width="0.9"/><line x1="141" y1="579.5" x2="163" y2="579.5" stroke="#b01010" stroke-width="0.9"/><line x1="141" y1="579.5" x2="137.5" y2="586" stroke="#2030c0" stroke-width="0.9"/><text x="139.3" y="563" font-size="4.6" fill="#1a8a1a" font-family="Liberation Sans">b</text><text x="163.8" y="582.6" font-size="4.6" fill="#c01010" font-family="Liberation Sans">a</text><text x="135" y="593.4" font-size="4.6" fill="#2030c0" font-family="Liberation Sans">c</text></svg>
</div>
<div class="a" style="left:0;top:0;width:1024px;height:630px;clip-path:inset(343.2px 54.799999999999955px 0px 523.7px)">
<div class="a" style="left:523.7px;top:343.2px;width:445.5px;height:296.8px;background:#dbe5ef;border:0.8px solid #9fb0c4"></div>
<div class="a" style="left:524.5px;top:344.0px;width:443.9px;height:11px;background:linear-gradient(#e9f0f7,#d5e0eb)"></div>
<div class="a" style="left:527.5px;top:346px;width:6px;height:6px;background:#222;border:0.6px solid #888"></div>
<div class="t" style="left:534.5px;top:346.62px;font-size:5.3px;line-height:6.36px;color:#222;">K Mn O4 - 00-001-0725</div>
<div class="a" style="left:925.5px;top:346px;width:13px;height:7.7px;border:0.7px solid #a4b2c2;border-radius:1.5px;background:linear-gradient(#f4f7fa,#dde5ee)"></div>
<svg class="a" style="left:0;top:0" width="1" height="1"><rect x="929.4" y="349.65000000000003" width="5.2" height="1.6" fill="none" stroke="#6a7888" stroke-width="0.6"/></svg>
<div class="a" style="left:939.9px;top:346px;width:13px;height:7.7px;border:0.7px solid #a4b2c2;border-radius:1.5px;background:linear-gradient(#f4f7fa,#dde5ee)"></div>
<svg class="a" style="left:0;top:0" width="1" height="1"><rect x="944.0" y="347.85" width="4.8" height="3.8" fill="none" stroke="#6a7888" stroke-width="0.6"/><rect x="945.1999999999999" y="348.85" width="2.4" height="1.8" fill="none" stroke="#6a7888" stroke-width="0.5"/></svg>
<div class="a" style="left:954.3px;top:346px;width:13px;height:7.7px;border:0.7px solid #8a3a30;border-radius:1.5px;background:linear-gradient(#eaa090,#d05a44 50%,#c03a26)"></div>
<svg class="a" style="left:0;top:0" width="1" height="1"><path d="M958.8 348.05L962.8 351.65000000000003M962.8 348.05L958.8 351.65000000000003" stroke="#fff" stroke-width="1.1"/></svg>
<div class="a" style="left:526.5px;top:354.8px;width:439.7px;height:280px;background:#f0f0f0"></div>
<div class="a" style="left:526.5px;top:354.8px;width:439.7px;height:8.9px;background:#fff"></div>
<div class="t" style="left:528.5px;top:357.10px;font-size:4.9px;line-height:5.88px;color:#111;">File</div>
<div class="t" style="left:541px;top:357.10px;font-size:4.9px;line-height:5.88px;color:#111;">View</div>
<div class="a" style="left:531.2px;top:368px;width:1.6px;height:262px;background:#e4e4e4;border-left:0.4px solid #d0d0d0"></div>
<div class="a" style="left:524.5px;top:354.8px;width:2.4px;height:280px;background:#bcd2ea"></div>
<div class="a" style="left:537px;top:369px;width:2.5px;height:0.6px;background:#999"></div>
<div class="t" style="left:540.3px;top:366.88px;font-size:4.7px;line-height:5.64px;color:#222;">800%</div>
<div class="a" style="left:537px;top:462px;width:2.5px;height:0.6px;background:#999"></div>
<div class="t" style="left:540.3px;top:459.88px;font-size:4.7px;line-height:5.64px;color:#222;">400%</div>
<div class="a" style="left:537px;top:555px;width:2.5px;height:0.6px;background:#999"></div>
<div class="t" style="left:540.3px;top:552.88px;font-size:4.7px;line-height:5.64px;color:#222;">200%</div>
<div class="a" style="left:537px;top:392px;width:2.5px;height:0.6px;background:#aaa"></div>
<div class="a" style="left:537px;top:415.5px;width:2.5px;height:0.6px;background:#aaa"></div>
<div class="a" style="left:537px;top:439px;width:2.5px;height:0.6px;background:#aaa"></div>
<div class="a" style="left:537px;top:485.5px;width:2.5px;height:0.6px;background:#aaa"></div>
<div class="a" style="left:537px;top:509px;width:2.5px;height:0.6px;background:#aaa"></div>
<div class="a" style="left:537px;top:532px;width:2.5px;height:0.6px;background:#aaa"></div>
<div class="a" style="left:537px;top:578.5px;width:2.5px;height:0.6px;background:#aaa"></div>
<div class="a" style="left:537px;top:602px;width:2.5px;height:0.6px;background:#aaa"></div>
<div class="a" style="left:554.8px;top:365px;width:12.2px;height:11.4px;background:#fff;border:0.5px solid #ccc"></div>
<div class="t" style="left:510.9px;width:100px;text-align:center;top:368.73px;font-size:4.6px;line-height:5.52px;color:#222;">cm</div>
<div class="a" style="left:567px;top:365px;width:273px;height:11.6px;background:linear-gradient(#1272d6,#0a64c4)"></div>
<div class="a" style="left:554.8px;top:376.4px;width:12.2px;height:260px;background:linear-gradient(90deg,#0d6ccc,#0a62c2)"></div>
<div class="a" style="left:594.2px;top:373.5px;width:0.5px;height:3px;background:#cfe4fb"></div>
<div class="t" style="left:544.2px;width:100px;text-align:center;top:367.53px;font-size:4.6px;line-height:5.52px;color:#e8f2ff;">1</div>
<div class="a" style="left:564px;top:403.7px;width:3px;height:0.5px;background:#cfe4fb"></div>
<div class="t" style="left:511px;width:100px;text-align:center;top:401.63px;font-size:4.6px;line-height:5.52px;color:#e8f2ff;">1</div>
<div class="a" style="left:621.4px;top:373.5px;width:0.5px;height:3px;background:#cfe4fb"></div>
<div class="t" style="left:571.4px;width:100px;text-align:center;top:367.53px;font-size:4.6px;line-height:5.52px;color:#e8f2ff;">2</div>
<div class="a" style="left:564px;top:431.0px;width:3px;height:0.5px;background:#cfe4fb"></div>
<div class="t" style="left:511px;width:100px;text-align:center;top:428.93px;font-size:4.6px;line-height:5.52px;color:#e8f2ff;">2</div>
<div class="a" style="left:648.6px;top:373.5px;width:0.5px;height:3px;background:#cfe4fb"></div>
<div class="t" style="left:598.6px;width:100px;text-align:center;top:367.53px;font-size:4.6px;line-height:5.52px;color:#e8f2ff;">3</div>
<div class="a" style="left:564px;top:458.29999999999995px;width:3px;height:0.5px;background:#cfe4fb"></div>
<div class="t" style="left:511px;width:100px;text-align:center;top:456.23px;font-size:4.6px;line-height:5.52px;color:#e8f2ff;">3</div>
<div class="a" style="left:675.8px;top:373.5px;width:0.5px;height:3px;background:#cfe4fb"></div>
<div class="t" style="left:625.8px;width:100px;text-align:center;top:367.53px;font-size:4.6px;line-height:5.52px;color:#e8f2ff;">4</div>
<div class="a" style="left:564px;top:485.59999999999997px;width:3px;height:0.5px;background:#cfe4fb"></div>
<div class="t" style="left:511px;width:100px;text-align:center;top:483.53px;font-size:4.6px;line-height:5.52px;color:#e8f2ff;">4</div>
<div class="a" style="left:703.0px;top:373.5px;width:0.5px;height:3px;background:#cfe4fb"></div>
<div class="t" style="left:653.0px;width:100px;text-align:center;top:367.53px;font-size:4.6px;line-height:5.52px;color:#e8f2ff;">5</div>
<div class="a" style="left:564px;top:512.9px;width:3px;height:0.5px;background:#cfe4fb"></div>
<div class="t" style="left:511px;width:100px;text-align:center;top:510.83px;font-size:4.6px;line-height:5.52px;color:#e8f2ff;">5</div>
<div class="a" style="left:730.2px;top:373.5px;width:0.5px;height:3px;background:#cfe4fb"></div>
<div class="t" style="left:680.2px;width:100px;text-align:center;top:367.53px;font-size:4.6px;line-height:5.52px;color:#e8f2ff;">6</div>
<div class="a" style="left:564px;top:540.2px;width:3px;height:0.5px;background:#cfe4fb"></div>
<div class="t" style="left:511px;width:100px;text-align:center;top:538.13px;font-size:4.6px;line-height:5.52px;color:#e8f2ff;">6</div>
<div class="a" style="left:757.4px;top:373.5px;width:0.5px;height:3px;background:#cfe4fb"></div>
<div class="t" style="left:707.4px;width:100px;text-align:center;top:367.53px;font-size:4.6px;line-height:5.52px;color:#e8f2ff;">7</div>
<div class="a" style="left:564px;top:567.5px;width:3px;height:0.5px;background:#cfe4fb"></div>
<div class="t" style="left:511px;width:100px;text-align:center;top:565.43px;font-size:4.6px;line-height:5.52px;color:#e8f2ff;">7</div>
<div class="a" style="left:784.6px;top:373.5px;width:0.5px;height:3px;background:#cfe4fb"></div>
<div class="t" style="left:734.6px;width:100px;text-align:center;top:367.53px;font-size:4.6px;line-height:5.52px;color:#e8f2ff;">8</div>
<div class="a" style="left:564px;top:594.8px;width:3px;height:0.5px;background:#cfe4fb"></div>
<div class="t" style="left:511px;width:100px;text-align:center;top:592.73px;font-size:4.6px;line-height:5.52px;color:#e8f2ff;">8</div>
<div class="a" style="left:811.8px;top:373.5px;width:0.5px;height:3px;background:#cfe4fb"></div>
<div class="t" style="left:761.8px;width:100px;text-align:center;top:367.53px;font-size:4.6px;line-height:5.52px;color:#e8f2ff;">9</div>
<div class="a" style="left:564px;top:622.1px;width:3px;height:0.5px;background:#cfe4fb"></div>
<div class="t" style="left:511px;width:100px;text-align:center;top:620.03px;font-size:4.6px;line-height:5.52px;color:#e8f2ff;">9</div>
<div class="a" style="left:839.0px;top:373.5px;width:0.5px;height:3px;background:#cfe4fb"></div>
<div class="t" style="left:789.0px;width:100px;text-align:center;top:367.53px;font-size:4.6px;line-height:5.52px;color:#e8f2ff;">10</div>
<div class="a" style="left:564px;top:649.4px;width:3px;height:0.5px;background:#cfe4fb"></div>
<div class="t" style="left:511px;width:100px;text-align:center;top:647.33px;font-size:4.6px;line-height:5.52px;color:#e8f2ff;">10</div>
<div class="a" style="left:567px;top:376.4px;width:273px;height:260px;background:#000"></div>
<svg class="a" style="left:0;top:0;clip-path:inset(376.4px 184.4px 0 567px)" width="1024" height="630"><line x1="558.9" y1="334.5" x2="882.0" y2="658.4" stroke="#9c9c9c" stroke-width="0.9"/><line x1="644.7" y1="318.5" x2="728.9" y2="688.5" stroke="#9c9c9c" stroke-width="0.9"/><line x1="578.8" y1="672.5" x2="881.9" y2="367.8" stroke="#9c9c9c" stroke-width="0.9"/><line x1="512.7" y1="592.7" x2="893.9" y2="412.9" stroke="#9c9c9c" stroke-width="0.9"/><line x1="603.8" y1="321.5" x2="753.3" y2="685.5" stroke="#9c9c9c" stroke-width="0.9"/><line x1="514.9" y1="648.7" x2="891.7" y2="432.9" stroke="#9c9c9c" stroke-width="0.9"/><line x1="768.4" y1="321.6" x2="616.5" y2="685.4" stroke="#9c9c9c" stroke-width="0.9"/><line x1="511.9" y1="614.5" x2="894.7" y2="449.0" stroke="#9c9c9c" stroke-width="0.9"/><line x1="851.3" y1="334.5" x2="524.7" y2="662.4" stroke="#9c9c9c" stroke-width="0.9"/><line x1="507.4" y1="520.3" x2="899.2" y2="563.0" stroke="#9c9c9c" stroke-width="0.9"/><line x1="577.2" y1="323.7" x2="762.9" y2="683.3" stroke="#9c9c9c" stroke-width="0.9"/><line x1="511.5" y1="413.7" x2="895.1" y2="571.2" stroke="#9c9c9c" stroke-width="0.9"/><line x1="804.4" y1="321.9" x2="648.0" y2="685.1" stroke="#9c9c9c" stroke-width="0.9"/><line x1="508.5" y1="454.5" x2="898.1" y2="542.4" stroke="#9c9c9c" stroke-width="0.9"/><line x1="673.5" y1="318.5" x2="757.1" y2="688.5" stroke="#9c9c9c" stroke-width="0.9"/><line x1="781.7" y1="322.8" x2="610.4" y2="684.2" stroke="#9c9c9c" stroke-width="0.9"/><line x1="636.6" y1="322.1" x2="796.4" y2="684.9" stroke="#9c9c9c" stroke-width="0.9"/><line x1="508.1" y1="485.7" x2="898.5" y2="560.7" stroke="#9c9c9c" stroke-width="0.9"/><line x1="507.3" y1="531.2" x2="899.3" y2="492.0" stroke="#9c9c9c" stroke-width="0.9"/><line x1="519.2" y1="375.0" x2="887.4" y2="654.3" stroke="#9c9c9c" stroke-width="0.9"/><line x1="514.2" y1="583.9" x2="892.4" y2="379.8" stroke="#9c9c9c" stroke-width="0.9"/><line x1="827.6" y1="672.3" x2="524.4" y2="371.0" stroke="#9c9c9c" stroke-width="0.9"/><line x1="840.6" y1="325.1" x2="633.4" y2="681.9" stroke="#9c9c9c" stroke-width="0.9"/><line x1="642.8" y1="323.0" x2="818.2" y2="684.0" stroke="#9c9c9c" stroke-width="0.9"/><line x1="511.4" y1="457.2" x2="895.2" y2="613.3" stroke="#9c9c9c" stroke-width="0.9"/><line x1="781.7" y1="317.6" x2="727.4" y2="689.4" stroke="#9c9c9c" stroke-width="0.9"/><line x1="513.4" y1="610.2" x2="893.2" y2="418.6" stroke="#9c9c9c" stroke-width="0.9"/><line x1="707.8" y1="317.4" x2="752.4" y2="689.6" stroke="#9c9c9c" stroke-width="0.9"/><line x1="734.6" y1="319.2" x2="631.4" y2="687.8" stroke="#9c9c9c" stroke-width="0.9"/><line x1="703.0" y1="689.2" x2="639.8" y2="317.8" stroke="#9c9c9c" stroke-width="0.9"/><line x1="518.3" y1="435.7" x2="836.8" y2="665.1" stroke="#9c9c9c" stroke-width="0.9"/><line x1="507.2" y1="474.0" x2="899.4" y2="505.4" stroke="#9c9c9c" stroke-width="0.9"/><line x1="891.5" y1="588.6" x2="515.1" y2="370.3" stroke="#9c9c9c" stroke-width="0.9"/><line x1="860.8" y1="334.7" x2="524.5" y2="669.3" stroke="#a87c28" stroke-width="0.9"/><line x1="881.9" y1="356.7" x2="567.8" y2="672.5" stroke="#a87c28" stroke-width="0.9"/><defs><radialGradient id="fade"><stop offset="0" stop-color="#fff"/><stop offset="0.5" stop-color="#fff"/><stop offset="1" stop-color="#000"/></radialGradient><mask id="mk"><circle cx="703.3" cy="513.8" r="100" fill="url(#fade)"/></mask></defs><g mask="url(#mk)"><line x1="593.0" y1="497.8" x2="812.9" y2="493.7" stroke="#9a9a9a" stroke-width="0.8"/><line x1="595.5" y1="486.0" x2="814.5" y2="507.0" stroke="#9a9a9a" stroke-width="0.8"/><line x1="598.8" y1="478.1" x2="812.5" y2="530.3" stroke="#9a9a9a" stroke-width="0.8"/><line x1="608.9" y1="455.5" x2="809.6" y2="545.5" stroke="#9a9a9a" stroke-width="0.8"/><line x1="626.4" y1="430.3" x2="810.8" y2="550.3" stroke="#9a9a9a" stroke-width="0.8"/><line x1="632.1" y1="426.7" x2="803.9" y2="564.1" stroke="#9a9a9a" stroke-width="0.8"/><line x1="648.9" y1="415.6" x2="791.6" y2="583.1" stroke="#9a9a9a" stroke-width="0.8"/><line x1="651.2" y1="416.4" x2="772.2" y2="600.2" stroke="#9a9a9a" stroke-width="0.8"/><line x1="644.2" y1="419.2" x2="728.0" y2="622.6" stroke="#9a9a9a" stroke-width="0.8"/><line x1="651.7" y1="414.2" x2="712.8" y2="625.6" stroke="#9a9a9a" stroke-width="0.8"/><line x1="711.9" y1="401.9" x2="739.1" y2="620.2" stroke="#9a9a9a" stroke-width="0.8"/><line x1="693.7" y1="403.6" x2="690.5" y2="623.6" stroke="#9a9a9a" stroke-width="0.8"/><line x1="744.3" y1="409.1" x2="708.2" y2="626.1" stroke="#9a9a9a" stroke-width="0.8"/><line x1="708.5" y1="400.7" x2="646.6" y2="611.8" stroke="#9a9a9a" stroke-width="0.8"/><line x1="732.9" y1="406.4" x2="642.2" y2="606.9" stroke="#9a9a9a" stroke-width="0.8"/><line x1="781.8" y1="432.7" x2="667.7" y2="620.9" stroke="#9a9a9a" stroke-width="0.8"/><line x1="756.8" y1="415.4" x2="617.2" y2="585.5" stroke="#9a9a9a" stroke-width="0.8"/><line x1="779.4" y1="432.9" x2="607.6" y2="570.3" stroke="#9a9a9a" stroke-width="0.8"/><line x1="809.0" y1="477.1" x2="618.2" y2="586.6" stroke="#9a9a9a" stroke-width="0.8"/><line x1="796.1" y1="453.4" x2="599.3" y2="551.8" stroke="#9a9a9a" stroke-width="0.8"/><line x1="817.6" y1="512.5" x2="606.6" y2="574.8" stroke="#9a9a9a" stroke-width="0.8"/><line x1="808.3" y1="476.8" x2="592.1" y2="517.7" stroke="#9a9a9a" stroke-width="0.8"/></g><line x1="543.2" y1="334.5" x2="879.7" y2="672.5" stroke="#c8c8c8" stroke-width="4.9"/><line x1="543.2" y1="334.5" x2="879.7" y2="672.5" stroke="#ececec" stroke-width="3"/><line x1="524.7" y1="351.2" x2="844.3" y2="672.5" stroke="#c8c8c8" stroke-width="4.9"/><line x1="524.7" y1="351.2" x2="844.3" y2="672.5" stroke="#ececec" stroke-width="3"/><line x1="872.0" y1="334.5" x2="534.9" y2="672.5" stroke="#c8c8c8" stroke-width="4.9"/><line x1="872.0" y1="334.5" x2="534.9" y2="672.5" stroke="#ececec" stroke-width="3"/><line x1="882.0" y1="345.6" x2="556.1" y2="672.5" stroke="#c8c8c8" stroke-width="4.9"/><line x1="882.0" y1="345.6" x2="556.1" y2="672.5" stroke="#ececec" stroke-width="3"/><line x1="715.8" y1="317.4" x2="674.7" y2="689.6" stroke="#c8c8c8" stroke-width="4.9"/><line x1="715.8" y1="317.4" x2="674.7" y2="689.6" stroke="#ececec" stroke-width="3"/><line x1="735.7" y1="317.4" x2="693.7" y2="689.6" stroke="#c8c8c8" stroke-width="4.9"/><line x1="735.7" y1="317.4" x2="693.7" y2="689.6" stroke="#ececec" stroke-width="3"/><line x1="507.4" y1="526.9" x2="899.2" y2="482.1" stroke="#c8c8c8" stroke-width="4.9"/><line x1="507.4" y1="526.9" x2="899.2" y2="482.1" stroke="#ececec" stroke-width="3"/><line x1="507.4" y1="546.6" x2="899.2" y2="501.1" stroke="#c8c8c8" stroke-width="4.9"/><line x1="507.4" y1="546.6" x2="899.2" y2="501.1" stroke="#ececec" stroke-width="3"/><defs><radialGradient id="glow"><stop offset="0" stop-color="#fff" stop-opacity="0.22"/><stop offset="1" stop-color="#fff" stop-opacity="0"/></radialGradient></defs><circle cx="703.3" cy="513.8" r="48" fill="url(#glow)"/><ellipse cx="703.3" cy="513.8" rx="9.2" ry="5.6" transform="rotate(-38 703.3 513.8)" fill="#000"/><circle cx="703.5" cy="513.6" r="0.7" fill="#e02020"/></svg>
<div class="t" style="left:844px;top:367.67px;font-size:4.95px;line-height:5.94px;color:#2a5db0;">Crystallography</div>
<div class="a" style="left:882.75px;top:368.7px;width:81.25px;height:0.6px;background:#d4d4d4"></div>
<div class="t" style="left:844px;top:375.30px;font-size:4.9px;line-height:5.88px;color:#111;">Crystal System:</div>
<div class="t" style="left:881px;top:375.30px;font-size:4.9px;line-height:5.88px;color:#2a5db0;">Orthorhombic</div>
<div class="t" style="left:844px;top:384.40px;font-size:4.9px;line-height:5.88px;color:#111;">Space Group:</div>
<div class="t" style="left:881px;top:384.40px;font-size:4.9px;line-height:5.88px;color:#2a5db0;">Pnma (62)</div>
<div class="a" style="left:915.5px;top:374px;width:0.6px;height:25px;background:#d0d0d0"></div>
<div class="t" style="left:919px;top:375.30px;font-size:4.9px;line-height:5.88px;color:#111;">a:</div>
<div class="t" style="left:925.2px;top:375.30px;font-size:4.9px;line-height:5.88px;color:#2a5db0;">9.09 &Aring;</div>
<div class="t" style="left:947.5px;top:375.30px;font-size:4.9px;line-height:5.88px;color:#111;">&alpha;:</div>
<div class="t" style="left:952.5px;top:375.30px;font-size:4.9px;line-height:5.88px;color:#2a5db0;">90&deg;</div>
<div class="t" style="left:919px;top:384.40px;font-size:4.9px;line-height:5.88px;color:#111;">b:</div>
<div class="t" style="left:925.2px;top:384.40px;font-size:4.9px;line-height:5.88px;color:#2a5db0;">5.72 &Aring;</div>
<div class="t" style="left:947.5px;top:384.40px;font-size:4.9px;line-height:5.88px;color:#111;">&beta;:</div>
<div class="t" style="left:952.5px;top:384.40px;font-size:4.9px;line-height:5.88px;color:#2a5db0;">90&deg;</div>
<div class="t" style="left:919px;top:393.60px;font-size:4.9px;line-height:5.88px;color:#111;">c:</div>
<div class="t" style="left:925.2px;top:393.60px;font-size:4.9px;line-height:5.88px;color:#2a5db0;">7.41 &Aring;</div>
<div class="t" style="left:947.5px;top:393.60px;font-size:4.9px;line-height:5.88px;color:#111;">&gamma;:</div>
<div class="t" style="left:952.5px;top:393.60px;font-size:4.9px;line-height:5.88px;color:#2a5db0;">90&deg;</div>
<div class="t" style="left:844px;top:400.27px;font-size:4.95px;line-height:5.94px;color:#2a5db0;">Camera</div>
<div class="a" style="left:860.7px;top:401.3px;width:103.29999999999995px;height:0.6px;background:#d4d4d4"></div>
<svg class="a" style="left:844.5px;top:409.59999999999997px" width="5.6" height="5.6"><circle cx="2.8" cy="2.8" r="2.4" fill="#fff" stroke="#6a6a6a" stroke-width="0.7"/><circle cx="2.8" cy="2.8" r="1.35" fill="#222"/></svg>
<div class="t" style="left:851.2px;top:410.19px;font-size:4.9px;line-height:5.88px;color:#111;">Camera constant:</div>
<div class="a" style="left:898.8px;top:408.09999999999997px;width:24.5px;height:8.6px;background:#fff;border:0.6px solid #b0b0b0"></div>
<div class="t" style="left:900.5999999999999px;top:410.19px;font-size:4.9px;line-height:5.88px;color:#111;">2.51</div>
<svg class="a" style="left:844.5px;top:420.3px" width="5.6" height="5.6"><circle cx="2.8" cy="2.8" r="2.4" fill="#fff" stroke="#6a6a6a" stroke-width="0.7"/></svg>
<div class="t" style="left:851.2px;top:420.90px;font-size:4.9px;line-height:5.88px;color:#111;">Camera length (cm):</div>
<div class="a" style="left:898.8px;top:418.8px;width:24.5px;height:8.6px;background:#f0f0f0;border:0.6px solid #cfcfcf"></div>
<div class="t" style="left:900.5999999999999px;top:420.90px;font-size:4.9px;line-height:5.88px;color:#111;">100</div>
<div class="t" style="left:844px;top:429.47px;font-size:4.95px;line-height:5.94px;color:#2a5db0;">Energy</div>
<div class="a" style="left:860.7px;top:430.5px;width:103.29999999999995px;height:0.6px;background:#d4d4d4"></div>
<svg class="a" style="left:844.5px;top:438.5px" width="5.6" height="5.6"><circle cx="2.8" cy="2.8" r="2.4" fill="#fff" stroke="#6a6a6a" stroke-width="0.7"/><circle cx="2.8" cy="2.8" r="1.35" fill="#222"/></svg>
<div class="t" style="left:851.2px;top:439.10px;font-size:4.9px;line-height:5.88px;color:#111;">Voltage (keV):</div>
<div class="a" style="left:890.4px;top:437.0px;width:24.600000000000023px;height:8.6px;background:#fff;border:0.6px solid #b0b0b0"></div>
<div class="t" style="left:892.1999999999999px;top:439.10px;font-size:4.9px;line-height:5.88px;color:#111;">200</div>
<svg class="a" style="left:844.5px;top:449.0px" width="5.6" height="5.6"><circle cx="2.8" cy="2.8" r="2.4" fill="#fff" stroke="#6a6a6a" stroke-width="0.7"/></svg>
<div class="t" style="left:851.2px;top:449.60px;font-size:4.9px;line-height:5.88px;color:#111;">Wavelength (&Aring;):</div>
<div class="a" style="left:890.4px;top:447.5px;width:24.600000000000023px;height:8.6px;background:#f0f0f0;border:0.6px solid #cfcfcf"></div>
<div class="t" style="left:892.1999999999999px;top:449.60px;font-size:4.9px;line-height:5.88px;color:#111;">0.0251</div>
<div class="t" style="left:844px;top:460.47px;font-size:4.95px;line-height:5.94px;color:#2a5db0;">Zone Axis</div>
<div class="a" style="left:868.05px;top:461.5px;width:95.95000000000005px;height:0.6px;background:#d4d4d4"></div>
<div class="t" style="left:844px;top:469.40px;font-size:4.9px;line-height:5.88px;color:#111;">u:</div>
<div class="a" style="left:851px;top:467.3px;width:9.299999999999955px;height:8.6px;background:#fff;border:0.6px solid #b0b0b0"></div>
<div class="t" style="left:852.8px;top:469.40px;font-size:4.9px;line-height:5.88px;color:#111;">0</div>
<div class="t" style="left:869px;top:469.40px;font-size:4.9px;line-height:5.88px;color:#111;">v:</div>
<div class="a" style="left:878.3px;top:467.3px;width:9.200000000000045px;height:8.6px;background:#fff;border:0.6px solid #b0b0b0"></div>
<div class="t" style="left:880.0999999999999px;top:469.40px;font-size:4.9px;line-height:5.88px;color:#111;">0</div>
<div class="t" style="left:893.5px;top:469.40px;font-size:4.9px;line-height:5.88px;color:#111;">w:</div>
<div class="a" style="left:899px;top:467.3px;width:10px;height:8.6px;background:#fff;border:0.6px solid #b0b0b0"></div>
<div class="t" style="left:900.8px;top:469.40px;font-size:4.9px;line-height:5.88px;color:#111;">1</div>
<div class="t" style="left:844px;top:478.77px;font-size:4.95px;line-height:5.94px;color:#2a5db0;">Plot</div>
<div class="a" style="left:855.8px;top:479.8px;width:108.20000000000005px;height:0.6px;background:#d4d4d4"></div>
<div class="t" style="left:844px;top:489.80px;font-size:4.9px;line-height:5.88px;color:#111;">Plot size (cm):</div>
<div class="a" style="left:887.3px;top:487.7px;width:24.600000000000023px;height:8.6px;background:#fff;border:0.6px solid #b0b0b0"></div>
<div class="t" style="right:118.60000000000002px;top:489.80px;font-size:4.9px;line-height:5.88px;color:#111;text-align:right;">10</div>
<svg class="a" style="left:906.6999999999999px;top:488.3px" width="4.5" height="7.4"><path d="M0.8 3L2.2 1.2L3.6 3Z M0.8 4.4L2.2 6.2L3.6 4.4Z" fill="#333"/></svg>
<div class="a" style="left:906.1px;top:488.2px;width:0.5px;height:7.6px;background:#ccc"></div>
<div class="t" style="left:844px;top:501.00px;font-size:4.9px;line-height:5.88px;color:#111;">Center x-y (cm):</div>
<div class="a" style="left:887.3px;top:498.9px;width:24.600000000000023px;height:8.6px;background:#fff;border:0.6px solid #b0b0b0"></div>
<div class="t" style="right:118.60000000000002px;top:501.00px;font-size:4.9px;line-height:5.88px;color:#111;text-align:right;">0</div>
<svg class="a" style="left:906.6999999999999px;top:499.5px" width="4.5" height="7.4"><path d="M0.8 3L2.2 1.2L3.6 3Z M0.8 4.4L2.2 6.2L3.6 4.4Z" fill="#333"/></svg>
<div class="a" style="left:906.1px;top:499.4px;width:0.5px;height:7.6px;background:#ccc"></div>
<div class="a" style="left:916px;top:498.9px;width:24.799999999999955px;height:8.6px;background:#fff;border:0.6px solid #b0b0b0"></div>
<div class="t" style="right:89.70000000000005px;top:501.00px;font-size:4.9px;line-height:5.88px;color:#111;text-align:right;">0</div>
<svg class="a" style="left:935.5999999999999px;top:499.5px" width="4.5" height="7.4"><path d="M0.8 3L2.2 1.2L3.6 3Z M0.8 4.4L2.2 6.2L3.6 4.4Z" fill="#333"/></svg>
<div class="a" style="left:935.0px;top:499.4px;width:0.5px;height:7.6px;background:#ccc"></div>
<div class="a" style="left:945px;top:500.2px;width:6px;height:6px;border-radius:50%;background:#1c72d4"></div>
<div class="t" style="left:898px;width:100px;text-align:center;top:501.22px;font-size:4.4px;line-height:5.28px;color:#fff;font-weight:bold">i</div>
<div class="t" style="left:844px;top:512.09px;font-size:4.9px;line-height:5.88px;color:#111;">Rotation angle (&deg;):</div>
<div class="a" style="left:887.3px;top:509.99999999999994px;width:24.600000000000023px;height:8.6px;background:#fff;border:0.6px solid #b0b0b0"></div>
<div class="t" style="right:118.60000000000002px;top:512.09px;font-size:4.9px;line-height:5.88px;color:#111;text-align:right;">0</div>
<svg class="a" style="left:906.6999999999999px;top:510.59999999999997px" width="4.5" height="7.4"><path d="M0.8 3L2.2 1.2L3.6 3Z M0.8 4.4L2.2 6.2L3.6 4.4Z" fill="#333"/></svg>
<div class="a" style="left:906.1px;top:510.49999999999994px;width:0.5px;height:7.6px;background:#ccc"></div>
<div class="t" style="left:844px;top:523.19px;font-size:4.9px;line-height:5.88px;color:#111;">Resolution (cm):</div>
<div class="a" style="left:887.3px;top:521.1px;width:24.600000000000023px;height:8.6px;background:#fff;border:0.6px solid #b0b0b0"></div>
<div class="t" style="left:889.0999999999999px;top:523.19px;font-size:4.9px;line-height:5.88px;color:#111;">0.01</div>
<div class="t" style="left:844px;top:533.47px;font-size:4.95px;line-height:5.94px;color:#2a5db0;">Kikuchi Lines</div>
<div class="a" style="left:877.85px;top:534.5px;width:86.14999999999998px;height:0.6px;background:#d4d4d4"></div>
<div class="a" style="left:874.2px;top:532.7px;width:6px;height:6px;border-radius:50%;background:#1c72d4"></div>
<div class="t" style="left:827.2px;width:100px;text-align:center;top:533.72px;font-size:4.4px;line-height:5.28px;color:#fff;font-weight:bold">i</div>
<div class="t" style="left:844px;top:543.79px;font-size:4.9px;line-height:5.88px;color:#111;">d-spacing units:</div>
<div class="a" style="left:892.7px;top:541.4px;width:23.299999999999955px;height:9.2px;background:#e8e8e8;border:0.6px solid #c8c8c8"></div>
<div class="t" style="left:894.7px;top:543.79px;font-size:4.9px;line-height:5.88px;color:#111;">nm&#8315;&#185;</div>
<svg class="a" style="left:910px;top:545px" width="4" height="3"><path d="M0.3 0.5L2 2.2L3.7 0.5" fill="none" stroke="#555" stroke-width="0.6"/></svg>
<div class="t" style="left:844px;top:554.00px;font-size:4.9px;line-height:5.88px;color:#111;">Maximum 1/d (nm&#8315;&#185;):</div>
<div class="a" style="left:892.7px;top:551.9000000000001px;width:24.59999999999991px;height:8.6px;background:#fff;border:0.6px solid #b0b0b0"></div>
<div class="t" style="left:894.5px;top:554.00px;font-size:4.9px;line-height:5.88px;color:#111;">20.0</div>
<div class="a" style="left:844.3px;top:564.0px;width:5.6px;height:5.6px;border:0.7px solid #7a7a7a;background:#fff"></div>
<svg class="a" style="left:844.3px;top:564.0px" width="5.6" height="5.6"><path d="M1 2.8 L2.2399999999999998 4.592 L4.8 1" fill="none" stroke="#333" stroke-width="0.8"/></svg>
<div class="t" style="left:851.5px;top:564.59px;font-size:4.9px;line-height:5.88px;color:#111;">Hide minimum intensities</div>
<div class="t" style="left:844px;top:574.27px;font-size:4.95px;line-height:5.94px;color:#2a5db0;">Colors</div>
<div class="a" style="left:860.7px;top:575.3px;width:103.29999999999995px;height:0.6px;background:#d4d4d4"></div>
<div class="t" style="left:844px;top:583.39px;font-size:4.9px;line-height:5.88px;color:#111;">Lines:</div>
<div class="a" style="left:875px;top:581.0px;width:37.39999999999998px;height:9.2px;background:#e8e8e8;border:0.6px solid #c8c8c8"></div>
<div class="a" style="left:877.3px;top:583.1px;width:5px;height:5px;background:#fff;border:0.4px solid #999"></div>
<div class="t" style="left:883.5px;top:583.39px;font-size:4.9px;line-height:5.88px;color:#111;">White</div>
<svg class="a" style="left:906.4px;top:584.6px" width="4" height="3"><path d="M0.3 0.5L2 2.2L3.7 0.5" fill="none" stroke="#555" stroke-width="0.6"/></svg>
<div class="t" style="left:844px;top:594.50px;font-size:4.9px;line-height:5.88px;color:#111;">Selected line:</div>
<div class="a" style="left:875px;top:592.1px;width:37.39999999999998px;height:9.2px;background:#e8e8e8;border:0.6px solid #c8c8c8"></div>
<div class="a" style="left:877.3px;top:594.2px;width:5px;height:5px;background:#f0c000;border:0.4px solid #999"></div>
<div class="t" style="left:883.5px;top:594.50px;font-size:4.9px;line-height:5.88px;color:#111;">Orange</div>
<svg class="a" style="left:906.4px;top:595.7px" width="4" height="3"><path d="M0.3 0.5L2 2.2L3.7 0.5" fill="none" stroke="#555" stroke-width="0.6"/></svg>
<div class="t" style="left:844px;top:605.59px;font-size:4.9px;line-height:5.88px;color:#111;">Center:</div>
<div class="a" style="left:875px;top:603.1999999999999px;width:37.39999999999998px;height:9.2px;background:#e8e8e8;border:0.6px solid #c8c8c8"></div>
<div class="a" style="left:877.3px;top:605.3px;width:5px;height:5px;background:#e00000;border:0.4px solid #999"></div>
<div class="t" style="left:883.5px;top:605.59px;font-size:4.9px;line-height:5.88px;color:#111;">Red</div>
<svg class="a" style="left:906.4px;top:606.8px" width="4" height="3"><path d="M0.3 0.5L2 2.2L3.7 0.5" fill="none" stroke="#555" stroke-width="0.6"/></svg>
<div class="t" style="left:844px;top:616.50px;font-size:4.9px;line-height:5.88px;color:#111;">Background:</div>
<div class="a" style="left:875px;top:614.1px;width:37.39999999999998px;height:9.2px;background:#e8e8e8;border:0.6px solid #c8c8c8"></div>
<div class="a" style="left:877.3px;top:616.2px;width:5px;height:5px;background:#000;border:0.4px solid #999"></div>
<div class="t" style="left:883.5px;top:616.50px;font-size:4.9px;line-height:5.88px;color:#111;">Black</div>
<svg class="a" style="left:906.4px;top:617.7px" width="4" height="3"><path d="M0.3 0.5L2 2.2L3.7 0.5" fill="none" stroke="#555" stroke-width="0.6"/></svg>
<div class="a" style="left:842px;top:626.2px;width:122px;height:0.6px;background:#d4d4d4"></div>
<div class="a" style="left:966.2px;top:354.8px;width:2.6px;height:280px;background:#bcd2ea"></div>
</div>
</body></html>
